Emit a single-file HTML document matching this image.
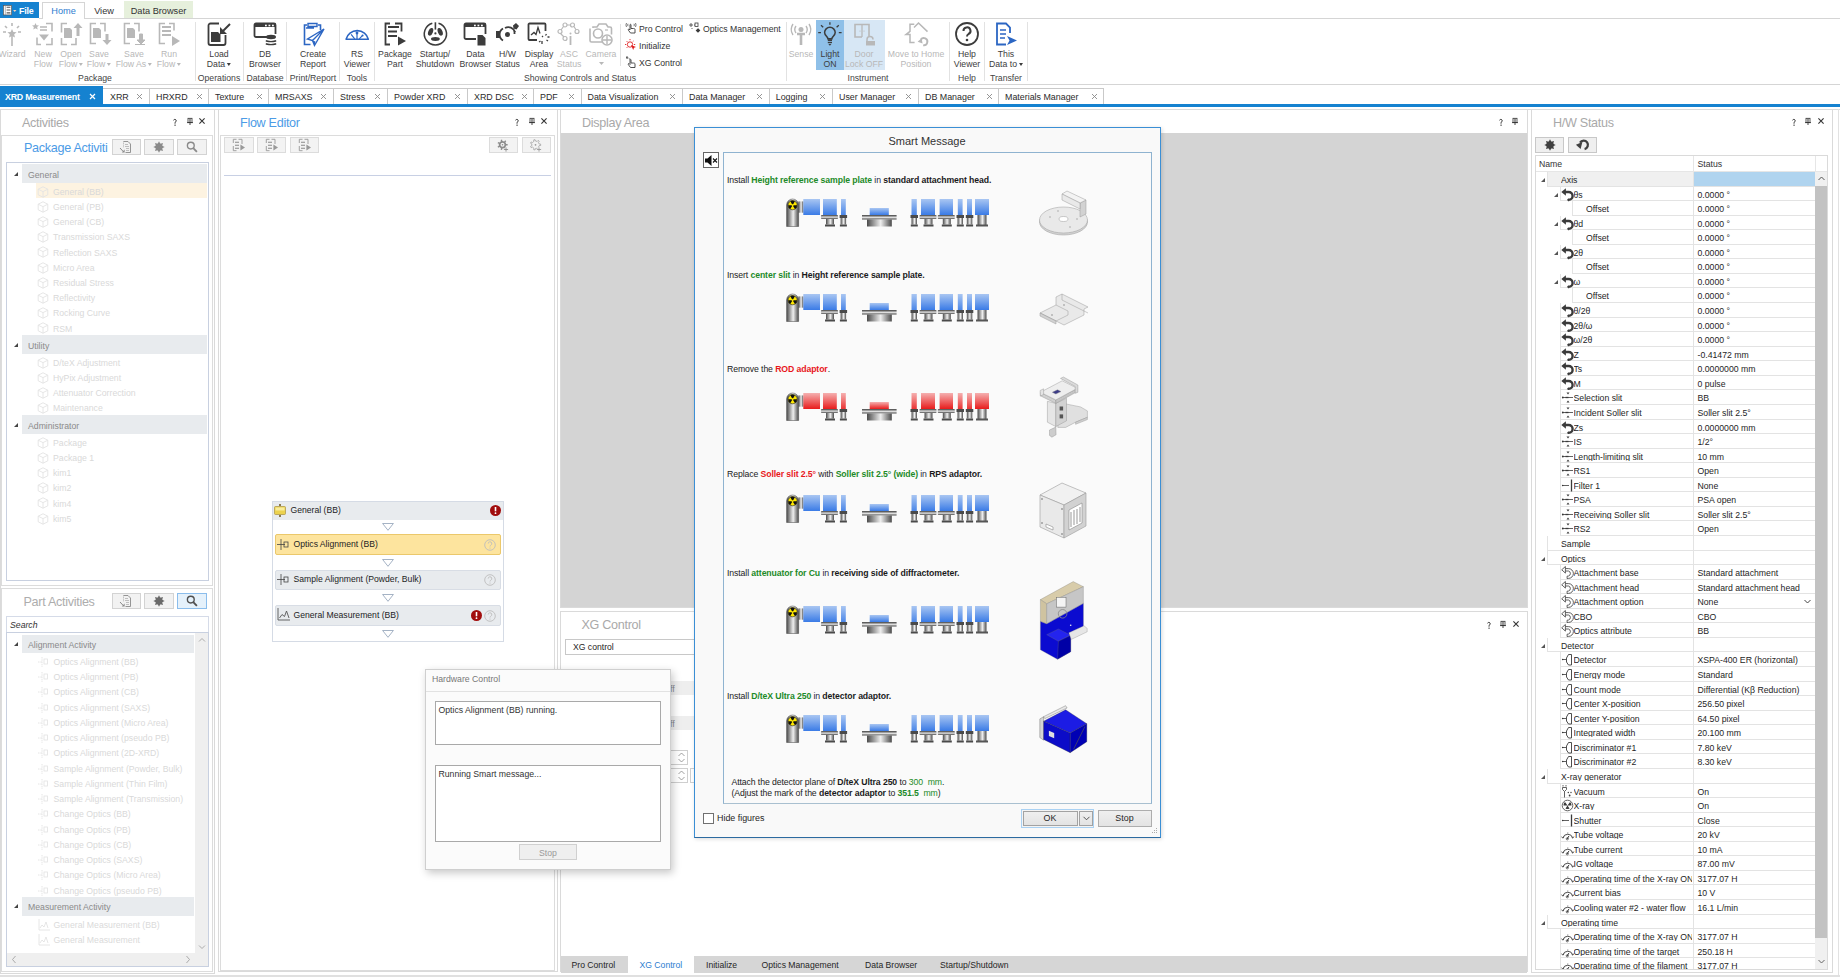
<!DOCTYPE html><html><head><meta charset="utf-8"><style>
*{margin:0;padding:0;box-sizing:border-box}
html,body{width:1840px;height:977px;overflow:hidden;background:#fff;font-family:"Liberation Sans",sans-serif;color:#262626}
.a{position:absolute}
.t{position:absolute;white-space:nowrap;line-height:1;font-size:8.7px}
.c{transform:translateX(-50%)}
svg{position:absolute;overflow:visible}
</style></head><body><div class="a" style="left:0px;top:2px;width:39px;height:16px;background:#1582d0"></div>
<svg style="left:2.6px;top:5.3px" width="9" height="10.3" viewBox="0 0 9 10.3"><rect x=".35" y=".35" width="8.3" height="9.6" fill="#fff" stroke="#555" stroke-width=".7"/><path d="M2.3 .5v9.3" stroke="#888" stroke-width=".6"/><path d="M3.6 2.2h3.8M3.6 5h3.8M3.6 7.9h3.8" stroke="#555" stroke-width="1.1"/></svg>
<svg style="left:13.2px;top:10px" width="3.5" height="2.5" viewBox="0 0 4 3"><path d="M0 0h4L2 2.5z" fill="#f3d6c0"/></svg>
<div class="t" style="left:19px;top:7.2px;color:#fff;font-size:8.9px;font-weight:bold;letter-spacing:-.2px">File</div>
<div class="a" style="left:39px;top:18px;width:3px;height:1px;background:#d5d5d5"></div>
<div class="a" style="left:42px;top:2px;width:43px;height:17px;background:#fff;border:1px solid #d5d5d5;border-bottom:none"></div>
<div class="t c" style="left:63.5px;top:7px;color:#2e7dd0;font-size:9.2px">Home</div>
<div class="t c" style="left:104px;top:7px;color:#333;font-size:9.2px">View</div>
<div class="a" style="left:124px;top:1px;width:69px;height:17px;background:#e6f0dc"></div>
<div class="t c" style="left:158.5px;top:7px;color:#333;font-size:9.2px">Data Browser</div>
<div class="a" style="left:85px;top:18px;width:1755px;height:1px;background:#d5d5d5"></div>
<div class="a" style="left:0px;top:84px;width:1840px;height:1px;background:#d5d5d5"></div>
<div class="a" style="left:195px;top:22px;width:1px;height:59px;background:#e2e2e2"></div>
<div class="a" style="left:243px;top:22px;width:1px;height:59px;background:#e2e2e2"></div>
<div class="a" style="left:286px;top:22px;width:1px;height:59px;background:#e2e2e2"></div>
<div class="a" style="left:339px;top:22px;width:1px;height:59px;background:#e2e2e2"></div>
<div class="a" style="left:374px;top:22px;width:1px;height:59px;background:#e2e2e2"></div>
<div class="a" style="left:786px;top:22px;width:1px;height:59px;background:#e2e2e2"></div>
<div class="a" style="left:949px;top:22px;width:1px;height:59px;background:#e2e2e2"></div>
<div class="a" style="left:984px;top:22px;width:1px;height:59px;background:#e2e2e2"></div>
<div class="a" style="left:1027px;top:22px;width:1px;height:59px;background:#e2e2e2"></div>
<div class="a" style="left:620px;top:24px;width:1px;height:42px;background:#e2e2e2"></div>
<div class="a" style="left:816px;top:20px;width:28px;height:50px;background:#8fc0e8"></div>
<div class="a" style="left:844px;top:20px;width:41px;height:50px;background:#d7e7f5"></div>
<svg style="left:0px;top:22px" width="24" height="24" viewBox="0 0 24 24"><g stroke="#b8b8b8" stroke-width="1.6" fill="none"><path d="M12 11v13M12 1v3M3 10h3M18 10h3M5 4l2 2M19 4l-2 2"/></g><path d="M12 7l1.4 3 3.2.3-2.4 2 .8 3.2L12 14l-3 1.5.8-3.2-2.4-2 3.2-.3z" fill="#b8b8b8"/></svg>
<div class="t c" style="left:12px;top:50.1px;color:#b8b8b8">Wizard</div>
<svg style="left:31px;top:22px" width="24" height="24" viewBox="0 0 24 24"><path d="M4.5 1l1 2.3 2.5.2-1.9 1.6.6 2.5L4.5 6.3 2.3 7.6l.6-2.5L1 3.5l2.5-.2z" fill="#b8b8b8"/><g stroke="#b8b8b8" stroke-width="1.6" fill="none"><path d="M15 1.5h6v8M9 5h7M9 8h7M21 16v6.5h-6M10 22.5H6v-7"/></g><path d="M8 12.5h10l-5 6z" fill="#b8b8b8"/></svg>
<div class="t c" style="left:43px;top:50.1px;color:#b8b8b8">New</div>
<div class="t c" style="left:43px;top:59.900000000000006px;color:#b8b8b8">Flow</div>
<svg style="left:59px;top:22px" width="24" height="24" viewBox="0 0 24 24"><g stroke="#b8b8b8" stroke-width="1.6" fill="none"><path d="M8 1.5H2.5v9M2.5 16v6.5H8M12 22.5h5V16"/></g><path d="M5 6h6l2 2v8H5z" fill="#b8b8b8"/><path d="M19 1l4.5 5h-3v8h-3V6h-3z" fill="#b8b8b8"/></svg>
<div class="t c" style="left:71px;top:50.1px;color:#b8b8b8">Open</div>
<div class="t c" style="left:71px;top:59.900000000000006px;color:#b8b8b8">Flow<span style="display:inline-block;width:0;height:0;border-left:2.5px solid transparent;border-right:2.5px solid transparent;border-top:3px solid #b8b8b8;margin-left:2px;vertical-align:1px"></span></div>
<svg style="left:88px;top:22px" width="24" height="24" viewBox="0 0 24 24"><g stroke="#b8b8b8" stroke-width="1.6" fill="none"><path d="M8 1.5H2.5v20H8M12 1.5h5v8"/></g><path d="M5 6h6l2 2v8H5z" fill="#b8b8b8"/><path d="M17.5 12h3v6h3l-4.5 5-4.5-5h3z" fill="#b8b8b8"/></svg>
<div class="t c" style="left:99px;top:50.1px;color:#b8b8b8">Save</div>
<div class="t c" style="left:99px;top:59.900000000000006px;color:#b8b8b8">Flow<span style="display:inline-block;width:0;height:0;border-left:2.5px solid transparent;border-right:2.5px solid transparent;border-top:3px solid #b8b8b8;margin-left:2px;vertical-align:1px"></span></div>
<svg style="left:122px;top:22px" width="24" height="24" viewBox="0 0 24 24"><g stroke="#b8b8b8" stroke-width="1.6" fill="none"><path d="M8 1.5H2.5v20H8M12 1.5h5v8"/></g><path d="M5 6h6l2 2v8H5z" fill="#b8b8b8"/><path d="M17.5 12h3v6h2.5l-4 4-4-4h2.5zM13 22.5h10" fill="#b8b8b8" stroke="#b8b8b8" stroke-width="1"/></svg>
<div class="t c" style="left:134px;top:50.1px;color:#b8b8b8">Save</div>
<div class="t c" style="left:134px;top:59.900000000000006px;color:#b8b8b8">Flow As<span style="display:inline-block;width:0;height:0;border-left:2.5px solid transparent;border-right:2.5px solid transparent;border-top:3px solid #b8b8b8;margin-left:2px;vertical-align:1px"></span></div>
<svg style="left:157px;top:22px" width="24" height="24" viewBox="0 0 24 24"><g stroke="#b8b8b8" stroke-width="1.6" fill="none"><path d="M8 1.5H2.5v20H8M12 1.5h5v7"/></g><path d="M5 5h9M5 9h9M5 13h9" stroke="#b8b8b8" stroke-width="2"/><path d="M15 14l8 5-8 5z" fill="#b8b8b8"/></svg>
<div class="t c" style="left:169px;top:50.1px;color:#b8b8b8">Run</div>
<div class="t c" style="left:169px;top:59.900000000000006px;color:#b8b8b8">Flow<span style="display:inline-block;width:0;height:0;border-left:2.5px solid transparent;border-right:2.5px solid transparent;border-top:3px solid #b8b8b8;margin-left:2px;vertical-align:1px"></span></div>
<div class="t c" style="left:95px;top:73.6px;color:#444">Package</div>
<svg style="left:207px;top:22px" width="24" height="24" viewBox="0 0 24 24"><path d="M12 1.5H3.5a2 2 0 0 0-2 2V21a2 2 0 0 0 2 2h13a2 2 0 0 0 2-2V13" stroke="#3c3c3c" stroke-width="1.8" fill="none"/><path d="M4 10h7l2.5 2.5V20H4z" fill="#3c3c3c"/><path d="M23 2L16 9" stroke="#3c3c3c" stroke-width="2"/><path d="M13 5v7h7z" fill="#3c3c3c"/></svg>
<div class="t c" style="left:219px;top:50.1px;color:#3c3c3c">Load</div>
<div class="t c" style="left:219px;top:59.900000000000006px;color:#3c3c3c">Data<span style="display:inline-block;width:0;height:0;border-left:2.5px solid transparent;border-right:2.5px solid transparent;border-top:3px solid #3c3c3c;margin-left:2px;vertical-align:1px"></span></div>
<div class="t c" style="left:219px;top:73.6px;color:#444">Operations</div>
<svg style="left:253px;top:22px" width="24" height="24" viewBox="0 0 24 24"><path d="M16 15H3a1.5 1.5 0 0 1-1.5-1.5V3A1.5 1.5 0 0 1 3 1.5h18A1.5 1.5 0 0 1 22.5 3v9" stroke="#3c3c3c" stroke-width="1.8" fill="none"/><path d="M1.5 2h21v3h-21z" fill="#3c3c3c"/><rect x="12" y="2.7" width="1.8" height="1.6" fill="#fff"/><rect x="15.5" y="2.7" width="1.8" height="1.6" fill="#fff"/><rect x="19" y="2.7" width="1.8" height="1.6" fill="#fff"/><ellipse cx="18" cy="15" rx="5" ry="2.2" fill="#3c3c3c"/><path d="M13 18.5c1 1.5 9 1.5 10 0M13 21.5c1 1.5 9 1.5 10 0" stroke="#3c3c3c" stroke-width="1.4" fill="none"/></svg>
<div class="t c" style="left:265px;top:50.1px;color:#3c3c3c">DB</div>
<div class="t c" style="left:265px;top:59.900000000000006px;color:#3c3c3c">Browser</div>
<div class="t c" style="left:265px;top:73.6px;color:#444">Database</div>
<svg style="left:301px;top:22px" width="24" height="24" viewBox="0 0 24 24"><path d="M6 3H3.5v19.5h6M17 3h2.5v5" stroke="#2c66c3" stroke-width="1.6" fill="none"/><path d="M7 1.5h9v3H7zM5 6h8" stroke="#2c66c3" stroke-width="1.4" fill="none"/><path d="M23 7L6.5 17l5 1.5 2 5L23 7zM11.5 18.5L23 7" stroke="#2c66c3" stroke-width="1.4" fill="none"/><path d="M11.5 18.5l2 5 1-4z" fill="#2c66c3"/></svg>
<div class="t c" style="left:313px;top:50.1px;color:#3c3c3c">Create</div>
<div class="t c" style="left:313px;top:59.900000000000006px;color:#3c3c3c">Report</div>
<div class="t c" style="left:313px;top:73.6px;color:#444">Print/Report</div>
<svg style="left:345px;top:22px" width="24" height="24" viewBox="0 0 24 24"><path d="M1.1 17.2A11.3 10.6 0 0 1 23.3 17.2Z" stroke="#2c66c3" stroke-width="1.6" fill="none" stroke-linejoin="round"/><path d="M12 11v6.2M6.1 12.4l3.6 4.4M17.6 13.4l-3.3 3.4" stroke="#2c66c3" stroke-width="1.2"/><circle cx="12" cy="11" r="1.4" fill="#2c66c3"/><circle cx="17.6" cy="13.4" r="1" fill="#2c66c3"/></svg>
<div class="t c" style="left:357px;top:50.1px;color:#3c3c3c">RS</div>
<div class="t c" style="left:357px;top:59.900000000000006px;color:#3c3c3c">Viewer</div>
<div class="t c" style="left:357px;top:73.6px;color:#444">Tools</div>
<svg style="left:383px;top:22px" width="24" height="24" viewBox="0 0 24 24"><g stroke="#3c3c3c" stroke-width="1.8" fill="none"><path d="M7 1.5H2.5v21H7M12 1.5h6.5v8"/></g><path d="M5 5h11M5 9.5h9M5 14h9" stroke="#3c3c3c" stroke-width="2.2"/><path d="M15 14.5l8 4.5-8 4.5z" fill="#3c3c3c"/></svg>
<div class="t c" style="left:395px;top:50.1px;color:#3c3c3c">Package</div>
<div class="t c" style="left:395px;top:59.900000000000006px;color:#3c3c3c">Part</div>
<svg style="left:423px;top:22px" width="24" height="24" viewBox="0 0 24 24"><path d="M9.3 1.2A11.1 11.1 0 1 0 15.5 1.2" stroke="#3c3c3c" stroke-width="1.5" fill="none"/><path d="M12.4 .3V7.6" stroke="#3c3c3c" stroke-width="1.6"/><ellipse cx="7.6" cy="9.8" rx="2.3" ry="4" transform="rotate(22 7.6 9.8)" fill="#3c3c3c"/><ellipse cx="17.2" cy="9.8" rx="2.3" ry="4" transform="rotate(-22 17.2 9.8)" fill="#3c3c3c"/><ellipse cx="12.4" cy="17" rx="4.4" ry="1.9" fill="#3c3c3c"/><circle cx="12.4" cy="11.4" r="1.1" fill="#3c3c3c"/></svg>
<div class="t c" style="left:435px;top:50.1px;color:#3c3c3c">Startup/</div>
<div class="t c" style="left:435px;top:59.900000000000006px;color:#3c3c3c">Shutdown</div>
<svg style="left:463px;top:22px" width="24" height="24" viewBox="0 0 24 24"><path d="M13 17H3a1.5 1.5 0 0 1-1.5-1.5V3A1.5 1.5 0 0 1 3 1.5h18A1.5 1.5 0 0 1 22.5 3v9" stroke="#3c3c3c" stroke-width="1.8" fill="none"/><path d="M1.5 2h21v3h-21z" fill="#3c3c3c"/><rect x="11" y="2.7" width="1.8" height="1.6" fill="#fff"/><rect x="14.5" y="2.7" width="1.8" height="1.6" fill="#fff"/><rect x="18" y="2.7" width="1.8" height="1.6" fill="#fff"/><path d="M14.5 13h5l3 3v7.5h-8z" fill="#3c3c3c"/></svg>
<div class="t c" style="left:475.5px;top:50.1px;color:#3c3c3c">Data</div>
<div class="t c" style="left:475.5px;top:59.900000000000006px;color:#3c3c3c">Browser</div>
<svg style="left:495px;top:22px" width="24" height="24" viewBox="0 0 24 24"><path d="M1 9h4v7H1z" fill="#3c3c3c"/><path d="M8 6.5a7 7 0 0 0 0 12" stroke="#3c3c3c" stroke-width="1.8" fill="none"/><circle cx="12.5" cy="12.5" r="2.5" fill="#3c3c3c"/><path d="M10 6a7 7 0 0 1 10 4" stroke="#3c3c3c" stroke-width="1.8" fill="none"/><path d="M18 3.5l3-2.5 3 3-2.5 3.5-3-1z" fill="#3c3c3c"/><path d="M19.5 9v3" stroke="#3c3c3c" stroke-width="1.8"/></svg>
<div class="t c" style="left:507.5px;top:50.1px;color:#3c3c3c">H/W</div>
<div class="t c" style="left:507.5px;top:59.900000000000006px;color:#3c3c3c">Status</div>
<svg style="left:527px;top:22px" width="24" height="24" viewBox="0 0 24 24"><path d="M10 18H2.5a1 1 0 0 1-1-1V2.5a1 1 0 0 1 1-1h15a1 1 0 0 1 1 1V9" stroke="#3c3c3c" stroke-width="1.8" fill="none"/><path d="M4 13l3-2.5 2 2 2-7 2 6" stroke="#3c3c3c" stroke-width="1.3" fill="none"/><path d="M15 19v3M15 14l1 1M19.5 12l-1 1.5M22.5 15h-2M21 19l-1.5-1M12 20l1.5-1" stroke="#3c3c3c" stroke-width="1.3"/></svg>
<div class="t c" style="left:539px;top:50.1px;color:#3c3c3c">Display</div>
<div class="t c" style="left:539px;top:59.900000000000006px;color:#3c3c3c">Area</div>
<svg style="left:557px;top:22px" width="24" height="24" viewBox="0 0 24 24"><g stroke="#b8b8b8" stroke-width="1.2" fill="none"><circle cx="8" cy="3" r="2"/><circle cx="15.5" cy="3" r="2"/><circle cx="3" cy="9.5" r="2"/><circle cx="20" cy="9.5" r="2"/><circle cx="8" cy="16.5" r="2"/><path d="M10 3h3.5M6.5 4.5l-2.5 3.5M17 4.5l2 3.2M3.5 11.5l3.5 3.5"/></g><path d="M13.5 14v9" stroke="#b8b8b8" stroke-width="1.8"/><circle cx="13.5" cy="11.5" r="1" fill="#b8b8b8"/></svg>
<div class="t c" style="left:569px;top:50.1px;color:#b8b8b8">ASC</div>
<div class="t c" style="left:569px;top:59.900000000000006px;color:#b8b8b8">Status</div>
<svg style="left:589px;top:22px" width="24" height="24" viewBox="0 0 24 24"><path d="M4 6V5h4l2-3h7l2 3h2a1.5 1.5 0 0 1 1.5 1.5v6M13 20H2.5A1.5 1.5 0 0 1 1 18.5v-12" stroke="#b8b8b8" stroke-width="1.6" fill="none"/><circle cx="9" cy="11.5" r="4.5" stroke="#b8b8b8" stroke-width="1.6" fill="none"/><path d="M16 8h3" stroke="#b8b8b8" stroke-width="1.2"/><circle cx="18" cy="18" r="5" stroke="#b8b8b8" stroke-width="1.6" fill="none"/><path d="M18 14v8M14 18h8" stroke="#b8b8b8" stroke-width="1.4"/></svg>
<div class="t c" style="left:601px;top:50.1px;color:#b8b8b8">Camera</div>
<svg style="left:598.5px;top:62px" width="5" height="3" viewBox="0 0 5 3"><path d="M0 0h5L2.5 3z" fill="#b8b8b8"/></svg>
<svg style="left:625px;top:22px" width="12" height="12" viewBox="0 0 12 12"><path d="M1.5 1a4 4 0 0 0 0 4M3 1.8a2.5 2.5 0 0 0 0 2.4M10.5 1a4 4 0 0 1 0 4M9 1.8a2.5 2.5 0 0 1 0 2.4" stroke="#3c3c3c" stroke-width=".7" fill="none"/><path d="M5 3v5l-1-1c-1 0-1 1 0 2l1.5 2h4.5V7.5c0-1-1-1-1.5-1H6V3c0-1-1-1-1 0z" stroke="#3c3c3c" stroke-width=".9" fill="#fff"/></svg>
<div class="t" style="left:639px;top:24.7px;color:#333">Pro Control</div>
<svg style="left:625px;top:39px" width="12" height="12" viewBox="0 0 12 12"><g stroke="#e02020" stroke-width=".9" fill="none"><circle cx="5" cy="5.5" r="2.7"/><path d="M5 0v1.2M0 5.5h1.2M9 5.5h1.2M1.5 2l.8.8M8.5 2l-.8.8M1.5 9l.8-.8"/></g><path d="M6 6l5 2-2 .7-.8 2.3z" fill="#e02020"/></svg>
<div class="t" style="left:639px;top:41.7px;color:#333">Initialize</div>
<svg style="left:625px;top:56px" width="12" height="12" viewBox="0 0 12 12"><path d="M1 1.5l2.5.5M2 0v3M4 3h1" stroke="#3c3c3c" stroke-width=".8"/><path d="M5 4v4.5l-1-1c-1 0-1 1 0 2l1.5 2h4.5V8c0-1-1-1-1.5-1H6V4c0-1-1-1-1 0z" stroke="#3c3c3c" stroke-width=".9" fill="#fff"/></svg>
<div class="t" style="left:639px;top:58.6px;color:#333">XG Control</div>
<svg style="left:689px;top:22px" width="12" height="12" viewBox="0 0 12 12"><path d="M0 3h4M2 1v4M3 6v1M5 3h1" stroke="#3c3c3c" stroke-width=".8"/><rect x="6" y="1" width="3" height="3.5" stroke="#3c3c3c" stroke-width=".8" fill="none"/><path d="M9 7l1.5 1.5L9 10 7.5 8.5z" fill="#3c3c3c" stroke="#3c3c3c" stroke-width="1.2"/></svg>
<div class="t" style="left:703px;top:24.7px;color:#333">Optics Management</div>
<div class="t c" style="left:580px;top:73.6px;color:#444">Showing Controls and Status</div>
<svg style="left:789px;top:22px" width="24" height="24" viewBox="0 0 24 24"><path d="M4 2a10 10 0 0 0 0 11M7 4a6 6 0 0 0 0 7M20 2a10 10 0 0 1 0 11M17 4a6 6 0 0 1 0 7" stroke="#b8b8b8" stroke-width="1.4" fill="none"/><circle cx="12" cy="7.5" r="2.5" fill="#b8b8b8"/><path d="M8 12h8M12 12v11" stroke="#b8b8b8" stroke-width="2.6"/></svg>
<div class="t c" style="left:801px;top:50.1px;color:#b8b8b8">Sense</div>
<svg style="left:818px;top:22px" width="24" height="24" viewBox="0 0 24 24"><path d="M9.9 16.8C9.9 14.8 6.6 13.6 6.6 10.6A5.3 5.3 0 0 1 17.2 10.6C17.2 13.6 13.9 14.8 13.9 16.8z" stroke="#3c3c3c" stroke-width="1.5" fill="none"/><path d="M9.8 17.2h4.2v2h-4.2z" fill="#3c3c3c"/><path d="M9.8 20.6h4.2" stroke="#3c3c3c" stroke-width="1.2"/><path d="M10.4 22h3l-1.5 1.8z" fill="#3c3c3c"/><path d="M11.9 .2v2.6M.2 10.7h2.8M20.8 10.7h2.8M3 3.2l2.2 2M20.8 3.2l-2.2 2" stroke="#3c3c3c" stroke-width="1.3"/></svg>
<div class="t c" style="left:830px;top:50.1px;color:#3c3c3c">Light</div>
<div class="t c" style="left:830px;top:59.900000000000006px;color:#3c3c3c">ON</div>
<svg style="left:852px;top:22px" width="24" height="24" viewBox="0 0 24 24"><path d="M10 15H3V2.5h14V14" stroke="#b8b8b8" stroke-width="1.6" fill="none"/><path d="M10 2.5v12.5" stroke="#b8b8b8" stroke-width="1.3"/><circle cx="8" cy="9" r=".6" fill="#b8b8b8"/><circle cx="12" cy="9" r=".6" fill="#b8b8b8"/><path d="M15 19.5v-2a3 3 0 0 1 6 0" stroke="#b8b8b8" stroke-width="1.5" fill="none"/><path d="M14 19h9v4.5h-9z" fill="#b8b8b8"/></svg>
<div class="t c" style="left:864px;top:50.1px;color:#b8b8b8">Door</div>
<div class="t c" style="left:864px;top:59.900000000000006px;color:#b8b8b8">Lock OFF</div>
<svg style="left:904px;top:22px" width="24" height="24" viewBox="0 0 24 24"><path d="M10.3 2.2H6V9.4L2 12.6H6V20.4H10.6M10 5.5L14.5 1 23.5 9.6" stroke="#b8b8b8" stroke-width="1.5" fill="none"/><path d="M16.8 17.6A3.6 3.6 0 1 1 19.2 23.2" stroke="#b8b8b8" stroke-width="1.9" fill="none"/><path d="M13.6 19.8L17.6 16.2 18.6 21.4z" fill="#b8b8b8"/></svg>
<div class="t c" style="left:916px;top:50.1px;color:#b8b8b8">Move to Home</div>
<div class="t c" style="left:916px;top:59.900000000000006px;color:#b8b8b8">Position</div>
<div class="t c" style="left:868px;top:73.6px;color:#444">Instrument</div>
<svg style="left:955px;top:22px" width="24" height="24" viewBox="0 0 24 24"><circle cx="12" cy="12" r="11" stroke="#3c3c3c" stroke-width="1.8" fill="none"/><path d="M8.5 9a3.5 3.5 0 1 1 5 3c-1 .6-1.5 1-1.5 2.5" stroke="#3c3c3c" stroke-width="2" fill="none"/><circle cx="12" cy="18" r="1.3" fill="#3c3c3c"/></svg>
<div class="t c" style="left:967px;top:50.1px;color:#3c3c3c">Help</div>
<div class="t c" style="left:967px;top:59.900000000000006px;color:#3c3c3c">Viewer</div>
<div class="t c" style="left:967px;top:73.6px;color:#444">Help</div>
<svg style="left:994px;top:22px" width="24" height="24" viewBox="0 0 24 24"><path d="M12 22.5H3V1.5h9l4 4V11" stroke="#2c66c3" stroke-width="1.8" fill="none"/><path d="M6 8h6M6 12h6M6 16h5" stroke="#2c66c3" stroke-width="1.6"/><path d="M13 14l10 4.5-10 4.5 2.5-4.5z" fill="#2c66c3"/></svg>
<div class="t c" style="left:1006px;top:50.1px;color:#3c3c3c">This</div>
<div class="t c" style="left:1006px;top:59.900000000000006px;color:#3c3c3c">Data to<span style="display:inline-block;width:0;height:0;border-left:2.5px solid transparent;border-right:2.5px solid transparent;border-top:3px solid #3c3c3c;margin-left:2px;vertical-align:1px"></span></div>
<div class="t c" style="left:1006px;top:73.6px;color:#444">Transfer</div>
<div class="a" style="left:0px;top:104px;width:1840px;height:3px;background:#1582d0"></div>
<div class="a" style="left:0px;top:109px;width:1840px;height:1px;background:#dadada"></div>
<div class="a" style="left:0px;top:86px;width:103px;height:18px;background:#1582d0"></div>
<div class="t" style="left:5px;top:92.8px;color:#fff;font-size:8.9px;font-weight:bold;letter-spacing:-0.25px">XRD Measurement</div>
<svg style="left:89.5px;top:93.5px" width="5" height="5" viewBox="0 0 5 5"><path d="M0 0L5 5M5 0L0 5" stroke="#fff" stroke-width="1.2"/></svg>
<div class="a" style="left:103px;top:88px;width:46px;height:16px;background:#fff;border-top:1px solid #c9c9c9"></div>
<div class="t" style="left:110px;top:92.8px;color:#2b2b2b;font-size:8.9px">XRR</div>
<svg style="left:136.5px;top:93.5px" width="5" height="5" viewBox="0 0 5 5"><path d="M0 0L5 5M5 0L0 5" stroke="#8a8a8a" stroke-width=".9"/></svg>
<div class="a" style="left:149px;top:88px;width:59px;height:16px;background:#fff;border-top:1px solid #c9c9c9"></div>
<div class="t" style="left:156px;top:92.8px;color:#2b2b2b;font-size:8.9px">HRXRD</div>
<svg style="left:196.5px;top:93.5px" width="5" height="5" viewBox="0 0 5 5"><path d="M0 0L5 5M5 0L0 5" stroke="#8a8a8a" stroke-width=".9"/></svg>
<div class="a" style="left:208px;top:88px;width:60px;height:16px;background:#fff;border-top:1px solid #c9c9c9"></div>
<div class="t" style="left:215px;top:92.8px;color:#2b2b2b;font-size:8.9px">Texture</div>
<svg style="left:256.5px;top:93.5px" width="5" height="5" viewBox="0 0 5 5"><path d="M0 0L5 5M5 0L0 5" stroke="#8a8a8a" stroke-width=".9"/></svg>
<div class="a" style="left:268px;top:88px;width:65px;height:16px;background:#fff;border-top:1px solid #c9c9c9"></div>
<div class="t" style="left:275px;top:92.8px;color:#2b2b2b;font-size:8.9px">MRSAXS</div>
<svg style="left:320.5px;top:93.5px" width="5" height="5" viewBox="0 0 5 5"><path d="M0 0L5 5M5 0L0 5" stroke="#8a8a8a" stroke-width=".9"/></svg>
<div class="a" style="left:333px;top:88px;width:54px;height:16px;background:#fff;border-top:1px solid #c9c9c9"></div>
<div class="t" style="left:340px;top:92.8px;color:#2b2b2b;font-size:8.9px">Stress</div>
<svg style="left:374.5px;top:93.5px" width="5" height="5" viewBox="0 0 5 5"><path d="M0 0L5 5M5 0L0 5" stroke="#8a8a8a" stroke-width=".9"/></svg>
<div class="a" style="left:387px;top:88px;width:80px;height:16px;background:#fff;border-top:1px solid #c9c9c9"></div>
<div class="t" style="left:394px;top:92.8px;color:#2b2b2b;font-size:8.9px">Powder XRD</div>
<svg style="left:454.5px;top:93.5px" width="5" height="5" viewBox="0 0 5 5"><path d="M0 0L5 5M5 0L0 5" stroke="#8a8a8a" stroke-width=".9"/></svg>
<div class="a" style="left:467px;top:88px;width:66px;height:16px;background:#fff;border-top:1px solid #c9c9c9"></div>
<div class="t" style="left:474px;top:92.8px;color:#2b2b2b;font-size:8.9px">XRD DSC</div>
<svg style="left:521.5px;top:93.5px" width="5" height="5" viewBox="0 0 5 5"><path d="M0 0L5 5M5 0L0 5" stroke="#8a8a8a" stroke-width=".9"/></svg>
<div class="a" style="left:533px;top:88px;width:47.5px;height:16px;background:#fff;border-top:1px solid #c9c9c9"></div>
<div class="t" style="left:540px;top:92.8px;color:#2b2b2b;font-size:8.9px">PDF</div>
<svg style="left:568.5px;top:93.5px" width="5" height="5" viewBox="0 0 5 5"><path d="M0 0L5 5M5 0L0 5" stroke="#8a8a8a" stroke-width=".9"/></svg>
<div class="a" style="left:580.5px;top:88px;width:101.5px;height:16px;background:#fff;border-top:1px solid #c9c9c9"></div>
<div class="t" style="left:587.5px;top:92.8px;color:#2b2b2b;font-size:8.9px">Data Visualization</div>
<svg style="left:670.0px;top:93.5px" width="5" height="5" viewBox="0 0 5 5"><path d="M0 0L5 5M5 0L0 5" stroke="#8a8a8a" stroke-width=".9"/></svg>
<div class="a" style="left:682px;top:88px;width:86.75px;height:16px;background:#fff;border-top:1px solid #c9c9c9"></div>
<div class="t" style="left:689px;top:92.8px;color:#2b2b2b;font-size:8.9px">Data Manager</div>
<svg style="left:756.5px;top:93.5px" width="5" height="5" viewBox="0 0 5 5"><path d="M0 0L5 5M5 0L0 5" stroke="#8a8a8a" stroke-width=".9"/></svg>
<div class="a" style="left:768.75px;top:88px;width:63.25px;height:16px;background:#fff;border-top:1px solid #c9c9c9"></div>
<div class="t" style="left:775.75px;top:92.8px;color:#2b2b2b;font-size:8.9px">Logging</div>
<svg style="left:820.0px;top:93.5px" width="5" height="5" viewBox="0 0 5 5"><path d="M0 0L5 5M5 0L0 5" stroke="#8a8a8a" stroke-width=".9"/></svg>
<div class="a" style="left:832px;top:88px;width:86px;height:16px;background:#fff;border-top:1px solid #c9c9c9"></div>
<div class="t" style="left:839px;top:92.8px;color:#2b2b2b;font-size:8.9px">User Manager</div>
<svg style="left:905.5px;top:93.5px" width="5" height="5" viewBox="0 0 5 5"><path d="M0 0L5 5M5 0L0 5" stroke="#8a8a8a" stroke-width=".9"/></svg>
<div class="a" style="left:918px;top:88px;width:80px;height:16px;background:#fff;border-top:1px solid #c9c9c9"></div>
<div class="t" style="left:925px;top:92.8px;color:#2b2b2b;font-size:8.9px">DB Manager</div>
<svg style="left:986.5px;top:93.5px" width="5" height="5" viewBox="0 0 5 5"><path d="M0 0L5 5M5 0L0 5" stroke="#8a8a8a" stroke-width=".9"/></svg>
<div class="a" style="left:998px;top:88px;width:105px;height:16px;background:#fff;border-top:1px solid #c9c9c9"></div>
<div class="t" style="left:1005px;top:92.8px;color:#2b2b2b;font-size:8.9px">Materials Manager</div>
<svg style="left:1091.5px;top:93.5px" width="5" height="5" viewBox="0 0 5 5"><path d="M0 0L5 5M5 0L0 5" stroke="#8a8a8a" stroke-width=".9"/></svg>
<div class="a" style="left:149px;top:88px;width:1px;height:16px;background:#c9c9c9"></div>
<div class="a" style="left:208px;top:88px;width:1px;height:16px;background:#c9c9c9"></div>
<div class="a" style="left:268px;top:88px;width:1px;height:16px;background:#c9c9c9"></div>
<div class="a" style="left:333px;top:88px;width:1px;height:16px;background:#c9c9c9"></div>
<div class="a" style="left:387px;top:88px;width:1px;height:16px;background:#c9c9c9"></div>
<div class="a" style="left:467px;top:88px;width:1px;height:16px;background:#c9c9c9"></div>
<div class="a" style="left:533px;top:88px;width:1px;height:16px;background:#c9c9c9"></div>
<div class="a" style="left:580.5px;top:88px;width:1px;height:16px;background:#c9c9c9"></div>
<div class="a" style="left:682px;top:88px;width:1px;height:16px;background:#c9c9c9"></div>
<div class="a" style="left:768.75px;top:88px;width:1px;height:16px;background:#c9c9c9"></div>
<div class="a" style="left:832px;top:88px;width:1px;height:16px;background:#c9c9c9"></div>
<div class="a" style="left:918px;top:88px;width:1px;height:16px;background:#c9c9c9"></div>
<div class="a" style="left:998px;top:88px;width:1px;height:16px;background:#c9c9c9"></div>
<div class="a" style="left:1103px;top:88px;width:1px;height:16px;background:#c9c9c9"></div>
<div class="a" style="left:0px;top:109px;width:215px;height:865px;border:1px solid #dadada;background:#fff"></div>
<div class="t" style="left:22px;top:116.5px;font-size:12.6px;color:#a9a9a9;letter-spacing:-0.3px">Activities</div>
<svg style="left:173.2px;top:118.8px" width="4" height="7" viewBox="0 0 4 7"><path d="M.5 1.2Q1.5 0 2.6.6 3.6 1.4 2.8 2.6 2 3.4 2 4.6" stroke="#222" stroke-width="1" fill="none"/><rect x="1.5" y="5.6" width="1.1" height="1.2" fill="#222"/></svg>
<svg style="left:186.5px;top:118px" width="6" height="7" viewBox="0 0 6 7"><rect x="1" y=".3" width="4" height="4.2" fill="none" stroke="#333" stroke-width=".8"/><rect x="2.5" y=".5" width="1" height="4" fill="#333"/><path d="M0 4.6h6M3 4.6V7" stroke="#333" stroke-width=".9"/></svg>
<svg style="left:199.0px;top:118px" width="6" height="6" viewBox="0 0 6 6"><path d="M.4 .4L5.6 5.6M5.6 .4L.4 5.6" stroke="#333" stroke-width="1.1"/></svg>
<div class="a" style="left:1px;top:135px;width:212px;height:451px;border:1px solid #dcdcdc;background:#fff"></div>
<div class="t" style="left:24px;top:141.5px;font-size:12.6px;color:#4c9be6;letter-spacing:-0.3px">Package Activiti</div>
<div class="a" style="left:111.5px;top:139px;width:29.5px;height:16px;background:#f2f2f2;border:1px solid #d3d3d3"></div>
<svg style="left:120.25px;top:141.0px" width="12" height="12" viewBox="0 0 12 12"><path d="M3.5 .5h4.5l2.5 2.5V11.5H5.5" stroke="#8a8a8a" stroke-width=".9" fill="none"/><path d="M5 3.5h3M5 5.5h4M6 7.5h3M6 9.5h3" stroke="#9a9a9a" stroke-width=".6"/><path d="M3.5 .5v6" stroke="#9a9a9a" stroke-width=".6" stroke-dasharray="1 .6"/><path d="M0 7l3.5 3.8" stroke="#8a8a8a" stroke-width="1"/><path d="M1.8 11.5H4.6V8.6z" fill="#8a8a8a"/></svg>
<div class="a" style="left:144.2px;top:139px;width:29.5px;height:16px;background:#f2f2f2;border:1px solid #d3d3d3"></div>
<svg style="left:152.95px;top:141.0px" width="12" height="12" viewBox="0 0 12 12"><path d="M6.00 0.30 L4.70 2.86 L1.97 1.97 L2.86 4.70 L0.30 6.00 L2.86 7.30 L1.97 10.03 L4.70 9.14 L6.00 11.70 L7.30 9.14 L10.03 10.03 L9.14 7.30 L11.70 6.00 L9.14 4.70 L10.03 1.97 L7.30 2.86z" fill="#8a8a8a"/><circle cx="6" cy="6" r="3.4" fill="#8a8a8a"/></svg>
<div class="a" style="left:177px;top:139px;width:29.5px;height:16px;background:#f2f2f2;border:1px solid #d3d3d3"></div>
<svg style="left:185.75px;top:141.0px" width="12" height="12" viewBox="0 0 12 12"><circle cx="4.8" cy="4.6" r="3.4" stroke="#8a8a8a" stroke-width="1.4" fill="none"/><path d="M7.3 7.2l3.6 3.6" stroke="#8a8a8a" stroke-width="1.9"/></svg>
<div class="a" style="left:6px;top:162px;width:203px;height:419px;border:1px solid #c8d0e0;background:#fff"></div>
<div class="a" style="left:22px;top:164px;width:185px;height:19px;background:#e8ebee"></div>
<svg style="left:14px;top:171.5px" width="4" height="4" viewBox="0 0 4 4"><path d="M4 0V4H0z" fill="#444"/></svg>
<div class="t" style="left:28px;top:170.6px;color:#8a8a8a">General</div>
<div class="a" style="left:36px;top:183px;width:171px;height:15px;background:#fdf3e1"></div>
<svg style="left:37px;top:185.5px" width="12" height="12" viewBox="0 0 12 12"><path d="M6 .8l4.8 2.4v5.6L6 11.2 1.2 8.8V3.2zM1.2 3.2L6 5.6l4.8-2.4M6 5.6v5.6" stroke="#e3e3e3" stroke-width=".9" fill="none"/></svg>
<div class="t" style="left:53px;top:187.8px;color:#d9d9d9">General (BB)</div>
<svg style="left:37px;top:200.7px" width="12" height="12" viewBox="0 0 12 12"><path d="M6 .8l4.8 2.4v5.6L6 11.2 1.2 8.8V3.2zM1.2 3.2L6 5.6l4.8-2.4M6 5.6v5.6" stroke="#e3e3e3" stroke-width=".9" fill="none"/></svg>
<div class="t" style="left:53px;top:203.0px;color:#d9d9d9">General (PB)</div>
<svg style="left:37px;top:215.89999999999998px" width="12" height="12" viewBox="0 0 12 12"><path d="M6 .8l4.8 2.4v5.6L6 11.2 1.2 8.8V3.2zM1.2 3.2L6 5.6l4.8-2.4M6 5.6v5.6" stroke="#e3e3e3" stroke-width=".9" fill="none"/></svg>
<div class="t" style="left:53px;top:218.2px;color:#d9d9d9">General (CB)</div>
<svg style="left:37px;top:231.09999999999997px" width="12" height="12" viewBox="0 0 12 12"><path d="M6 .8l4.8 2.4v5.6L6 11.2 1.2 8.8V3.2zM1.2 3.2L6 5.6l4.8-2.4M6 5.6v5.6" stroke="#e3e3e3" stroke-width=".9" fill="none"/></svg>
<div class="t" style="left:53px;top:233.39999999999998px;color:#d9d9d9">Transmission SAXS</div>
<svg style="left:37px;top:246.29999999999995px" width="12" height="12" viewBox="0 0 12 12"><path d="M6 .8l4.8 2.4v5.6L6 11.2 1.2 8.8V3.2zM1.2 3.2L6 5.6l4.8-2.4M6 5.6v5.6" stroke="#e3e3e3" stroke-width=".9" fill="none"/></svg>
<div class="t" style="left:53px;top:248.59999999999997px;color:#d9d9d9">Reflection SAXS</div>
<svg style="left:37px;top:261.49999999999994px" width="12" height="12" viewBox="0 0 12 12"><path d="M6 .8l4.8 2.4v5.6L6 11.2 1.2 8.8V3.2zM1.2 3.2L6 5.6l4.8-2.4M6 5.6v5.6" stroke="#e3e3e3" stroke-width=".9" fill="none"/></svg>
<div class="t" style="left:53px;top:263.79999999999995px;color:#d9d9d9">Micro Area</div>
<svg style="left:37px;top:276.69999999999993px" width="12" height="12" viewBox="0 0 12 12"><path d="M6 .8l4.8 2.4v5.6L6 11.2 1.2 8.8V3.2zM1.2 3.2L6 5.6l4.8-2.4M6 5.6v5.6" stroke="#e3e3e3" stroke-width=".9" fill="none"/></svg>
<div class="t" style="left:53px;top:278.99999999999994px;color:#d9d9d9">Residual Stress</div>
<svg style="left:37px;top:291.8999999999999px" width="12" height="12" viewBox="0 0 12 12"><path d="M6 .8l4.8 2.4v5.6L6 11.2 1.2 8.8V3.2zM1.2 3.2L6 5.6l4.8-2.4M6 5.6v5.6" stroke="#e3e3e3" stroke-width=".9" fill="none"/></svg>
<div class="t" style="left:53px;top:294.19999999999993px;color:#d9d9d9">Reflectivity</div>
<svg style="left:37px;top:307.0999999999999px" width="12" height="12" viewBox="0 0 12 12"><path d="M6 .8l4.8 2.4v5.6L6 11.2 1.2 8.8V3.2zM1.2 3.2L6 5.6l4.8-2.4M6 5.6v5.6" stroke="#e3e3e3" stroke-width=".9" fill="none"/></svg>
<div class="t" style="left:53px;top:309.3999999999999px;color:#d9d9d9">Rocking Curve</div>
<svg style="left:37px;top:322.2999999999999px" width="12" height="12" viewBox="0 0 12 12"><path d="M6 .8l4.8 2.4v5.6L6 11.2 1.2 8.8V3.2zM1.2 3.2L6 5.6l4.8-2.4M6 5.6v5.6" stroke="#e3e3e3" stroke-width=".9" fill="none"/></svg>
<div class="t" style="left:53px;top:324.5999999999999px;color:#d9d9d9">RSM</div>
<div class="a" style="left:22px;top:335px;width:185px;height:19px;background:#e8ebee"></div>
<svg style="left:14px;top:342.5px" width="4" height="4" viewBox="0 0 4 4"><path d="M4 0V4H0z" fill="#444"/></svg>
<div class="t" style="left:28px;top:341.6px;color:#8a8a8a">Utility</div>
<svg style="left:37px;top:356.5px" width="12" height="12" viewBox="0 0 12 12"><path d="M6 .8l4.8 2.4v5.6L6 11.2 1.2 8.8V3.2zM1.2 3.2L6 5.6l4.8-2.4M6 5.6v5.6" stroke="#e3e3e3" stroke-width=".9" fill="none"/></svg>
<div class="t" style="left:53px;top:358.8px;color:#d9d9d9">D/teX Adjustment</div>
<svg style="left:37px;top:371.7px" width="12" height="12" viewBox="0 0 12 12"><path d="M6 .8l4.8 2.4v5.6L6 11.2 1.2 8.8V3.2zM1.2 3.2L6 5.6l4.8-2.4M6 5.6v5.6" stroke="#e3e3e3" stroke-width=".9" fill="none"/></svg>
<div class="t" style="left:53px;top:374.0px;color:#d9d9d9">HyPix Adjustment</div>
<svg style="left:37px;top:386.9px" width="12" height="12" viewBox="0 0 12 12"><path d="M6 .8l4.8 2.4v5.6L6 11.2 1.2 8.8V3.2zM1.2 3.2L6 5.6l4.8-2.4M6 5.6v5.6" stroke="#e3e3e3" stroke-width=".9" fill="none"/></svg>
<div class="t" style="left:53px;top:389.2px;color:#d9d9d9">Attenuator Correction</div>
<svg style="left:37px;top:402.09999999999997px" width="12" height="12" viewBox="0 0 12 12"><path d="M6 .8l4.8 2.4v5.6L6 11.2 1.2 8.8V3.2zM1.2 3.2L6 5.6l4.8-2.4M6 5.6v5.6" stroke="#e3e3e3" stroke-width=".9" fill="none"/></svg>
<div class="t" style="left:53px;top:404.4px;color:#d9d9d9">Maintenance</div>
<div class="a" style="left:22px;top:415px;width:185px;height:19px;background:#e8ebee"></div>
<svg style="left:14px;top:422.5px" width="4" height="4" viewBox="0 0 4 4"><path d="M4 0V4H0z" fill="#444"/></svg>
<div class="t" style="left:28px;top:421.6px;color:#8a8a8a">Administrator</div>
<svg style="left:37px;top:436.5px" width="12" height="12" viewBox="0 0 12 12"><path d="M6 .8l4.8 2.4v5.6L6 11.2 1.2 8.8V3.2zM1.2 3.2L6 5.6l4.8-2.4M6 5.6v5.6" stroke="#e3e3e3" stroke-width=".9" fill="none"/></svg>
<div class="t" style="left:53px;top:438.8px;color:#d9d9d9">Package</div>
<svg style="left:37px;top:451.7px" width="12" height="12" viewBox="0 0 12 12"><path d="M6 .8l4.8 2.4v5.6L6 11.2 1.2 8.8V3.2zM1.2 3.2L6 5.6l4.8-2.4M6 5.6v5.6" stroke="#e3e3e3" stroke-width=".9" fill="none"/></svg>
<div class="t" style="left:53px;top:454.0px;color:#d9d9d9">Package 1</div>
<svg style="left:37px;top:466.9px" width="12" height="12" viewBox="0 0 12 12"><path d="M6 .8l4.8 2.4v5.6L6 11.2 1.2 8.8V3.2zM1.2 3.2L6 5.6l4.8-2.4M6 5.6v5.6" stroke="#e3e3e3" stroke-width=".9" fill="none"/></svg>
<div class="t" style="left:53px;top:469.2px;color:#d9d9d9">kim1</div>
<svg style="left:37px;top:482.09999999999997px" width="12" height="12" viewBox="0 0 12 12"><path d="M6 .8l4.8 2.4v5.6L6 11.2 1.2 8.8V3.2zM1.2 3.2L6 5.6l4.8-2.4M6 5.6v5.6" stroke="#e3e3e3" stroke-width=".9" fill="none"/></svg>
<div class="t" style="left:53px;top:484.4px;color:#d9d9d9">kim2</div>
<svg style="left:37px;top:497.29999999999995px" width="12" height="12" viewBox="0 0 12 12"><path d="M6 .8l4.8 2.4v5.6L6 11.2 1.2 8.8V3.2zM1.2 3.2L6 5.6l4.8-2.4M6 5.6v5.6" stroke="#e3e3e3" stroke-width=".9" fill="none"/></svg>
<div class="t" style="left:53px;top:499.59999999999997px;color:#d9d9d9">kim4</div>
<svg style="left:37px;top:512.5px" width="12" height="12" viewBox="0 0 12 12"><path d="M6 .8l4.8 2.4v5.6L6 11.2 1.2 8.8V3.2zM1.2 3.2L6 5.6l4.8-2.4M6 5.6v5.6" stroke="#e3e3e3" stroke-width=".9" fill="none"/></svg>
<div class="t" style="left:53px;top:514.8px;color:#d9d9d9">kim5</div>
<div class="a" style="left:1px;top:588px;width:212px;height:384px;border:1px solid #dcdcdc;background:#fff"></div>
<div class="t" style="left:23.5px;top:596px;font-size:12.6px;color:#adadad;letter-spacing:-0.3px">Part Activities</div>
<div class="a" style="left:111.5px;top:593px;width:29.5px;height:16px;background:#f2f2f2;border:1px solid #d3d3d3"></div>
<svg style="left:120.25px;top:595.0px" width="12" height="12" viewBox="0 0 12 12"><path d="M3.5 .5h4.5l2.5 2.5V11.5H5.5" stroke="#8a8a8a" stroke-width=".9" fill="none"/><path d="M5 3.5h3M5 5.5h4M6 7.5h3M6 9.5h3" stroke="#9a9a9a" stroke-width=".6"/><path d="M3.5 .5v6" stroke="#9a9a9a" stroke-width=".6" stroke-dasharray="1 .6"/><path d="M0 7l3.5 3.8" stroke="#8a8a8a" stroke-width="1"/><path d="M1.8 11.5H4.6V8.6z" fill="#8a8a8a"/></svg>
<div class="a" style="left:144.2px;top:593px;width:29.5px;height:16px;background:#f2f2f2;border:1px solid #d3d3d3"></div>
<svg style="left:152.95px;top:595.0px" width="12" height="12" viewBox="0 0 12 12"><path d="M6.00 0.30 L4.70 2.86 L1.97 1.97 L2.86 4.70 L0.30 6.00 L2.86 7.30 L1.97 10.03 L4.70 9.14 L6.00 11.70 L7.30 9.14 L10.03 10.03 L9.14 7.30 L11.70 6.00 L9.14 4.70 L10.03 1.97 L7.30 2.86z" fill="#6a6a6a"/><circle cx="6" cy="6" r="3.4" fill="#6a6a6a"/></svg>
<div class="a" style="left:177px;top:593px;width:29.5px;height:16px;background:#e5f1fb;border:1px solid #8bbdec"></div>
<svg style="left:185.75px;top:595.0px" width="12" height="12" viewBox="0 0 12 12"><circle cx="4.8" cy="4.6" r="3.4" stroke="#505050" stroke-width="1.4" fill="none"/><path d="M7.3 7.2l3.6 3.6" stroke="#505050" stroke-width="1.9"/></svg>
<div class="a" style="left:6px;top:616px;width:203px;height:17px;border:1px solid #d5dbe8;background:#fff"></div>
<div class="t" style="left:10px;top:621px;font-style:italic;color:#333">Search</div>
<div class="a" style="left:6px;top:632px;width:203px;height:335px;border:1px solid #c8d0e0;background:#fff"></div>
<div class="a" style="left:195px;top:633px;width:13px;height:320px;background:#efefef"></div>
<div class="a" style="left:7px;top:953px;width:201px;height:13px;background:#efefef"></div>
<svg style="left:199px;top:638px" width="6" height="4" viewBox="0 0 6 4"><path d="M0 3.5L3 .5 6 3.5" stroke="#999" stroke-width=".8" fill="none"/></svg>
<svg style="left:199px;top:945px" width="6" height="4" viewBox="0 0 6 4"><path d="M0 .5L3 3.5 6 .5" stroke="#999" stroke-width=".8" fill="none"/></svg>
<svg style="left:12px;top:956px" width="4" height="7" viewBox="0 0 4 7"><path d="M3.5 0L.5 3.5 3.5 7" stroke="#999" stroke-width=".8" fill="none"/></svg>
<svg style="left:186px;top:956px" width="4" height="7" viewBox="0 0 4 7"><path d="M.5 0L3.5 3.5.5 7" stroke="#999" stroke-width=".8" fill="none"/></svg>
<div class="a" style="left:22px;top:634.5px;width:172px;height:18.3px;background:#e8ebee"></div>
<svg style="left:14px;top:641.65px" width="4" height="4" viewBox="0 0 4 4"><path d="M4 0V4H0z" fill="#444"/></svg>
<div class="t" style="left:28px;top:640.75px;color:#8a8a8a">Alignment Activity</div>
<svg style="left:38px;top:655.9px" width="14" height="12" viewBox="0 0 14 12"><path d="M0 6h4M4 1v10" stroke="#dedede" stroke-width=".8" stroke-dasharray="1.5 .8"/><rect x="6" y="3" width="3.5" height="5" stroke="#e2e2e2" stroke-width=".8" fill="none"/></svg>
<div class="t" style="left:53.5px;top:657.9px;color:#d9d9d9">Optics Alignment (BB)</div>
<svg style="left:38px;top:671.15px" width="14" height="12" viewBox="0 0 14 12"><path d="M0 6h4M4 1v10" stroke="#dedede" stroke-width=".8" stroke-dasharray="1.5 .8"/><rect x="6" y="3" width="3.5" height="5" stroke="#e2e2e2" stroke-width=".8" fill="none"/></svg>
<div class="t" style="left:53.5px;top:673.15px;color:#d9d9d9">Optics Alignment (PB)</div>
<svg style="left:38px;top:686.4px" width="14" height="12" viewBox="0 0 14 12"><path d="M0 6h4M4 1v10" stroke="#dedede" stroke-width=".8" stroke-dasharray="1.5 .8"/><rect x="6" y="3" width="3.5" height="5" stroke="#e2e2e2" stroke-width=".8" fill="none"/></svg>
<div class="t" style="left:53.5px;top:688.4px;color:#d9d9d9">Optics Alignment (CB)</div>
<svg style="left:38px;top:701.65px" width="14" height="12" viewBox="0 0 14 12"><path d="M0 6h4M4 1v10" stroke="#dedede" stroke-width=".8" stroke-dasharray="1.5 .8"/><rect x="6" y="3" width="3.5" height="5" stroke="#e2e2e2" stroke-width=".8" fill="none"/></svg>
<div class="t" style="left:53.5px;top:703.65px;color:#d9d9d9">Optics Alignment (SAXS)</div>
<svg style="left:38px;top:716.9px" width="14" height="12" viewBox="0 0 14 12"><path d="M0 6h4M4 1v10" stroke="#dedede" stroke-width=".8" stroke-dasharray="1.5 .8"/><rect x="6" y="3" width="3.5" height="5" stroke="#e2e2e2" stroke-width=".8" fill="none"/></svg>
<div class="t" style="left:53.5px;top:718.9px;color:#d9d9d9">Optics Alignment (Micro Area)</div>
<svg style="left:38px;top:732.15px" width="14" height="12" viewBox="0 0 14 12"><path d="M0 6h4M4 1v10" stroke="#dedede" stroke-width=".8" stroke-dasharray="1.5 .8"/><rect x="6" y="3" width="3.5" height="5" stroke="#e2e2e2" stroke-width=".8" fill="none"/></svg>
<div class="t" style="left:53.5px;top:734.15px;color:#d9d9d9">Optics Alignment (pseudo PB)</div>
<svg style="left:38px;top:747.4px" width="14" height="12" viewBox="0 0 14 12"><path d="M0 6h4M4 1v10" stroke="#dedede" stroke-width=".8" stroke-dasharray="1.5 .8"/><rect x="6" y="3" width="3.5" height="5" stroke="#e2e2e2" stroke-width=".8" fill="none"/></svg>
<div class="t" style="left:53.5px;top:749.4px;color:#d9d9d9">Optics Alignment (2D-XRD)</div>
<svg style="left:38px;top:762.65px" width="14" height="12" viewBox="0 0 14 12"><path d="M0 6h4M4 1v10" stroke="#dedede" stroke-width=".8" stroke-dasharray="1.5 .8"/><rect x="6" y="3" width="3.5" height="5" stroke="#e2e2e2" stroke-width=".8" fill="none"/></svg>
<div class="t" style="left:53.5px;top:764.65px;color:#d9d9d9">Sample Alignment (Powder, Bulk)</div>
<svg style="left:38px;top:777.9px" width="14" height="12" viewBox="0 0 14 12"><path d="M0 6h4M4 1v10" stroke="#dedede" stroke-width=".8" stroke-dasharray="1.5 .8"/><rect x="6" y="3" width="3.5" height="5" stroke="#e2e2e2" stroke-width=".8" fill="none"/></svg>
<div class="t" style="left:53.5px;top:779.9px;color:#d9d9d9">Sample Alignment (Thin Film)</div>
<svg style="left:38px;top:793.15px" width="14" height="12" viewBox="0 0 14 12"><path d="M0 6h4M4 1v10" stroke="#dedede" stroke-width=".8" stroke-dasharray="1.5 .8"/><rect x="6" y="3" width="3.5" height="5" stroke="#e2e2e2" stroke-width=".8" fill="none"/></svg>
<div class="t" style="left:53.5px;top:795.15px;color:#d9d9d9">Sample Alignment (Transmission)</div>
<svg style="left:38px;top:808.4px" width="14" height="12" viewBox="0 0 14 12"><path d="M0 6h4M4 1v10" stroke="#dedede" stroke-width=".8" stroke-dasharray="1.5 .8"/><rect x="6" y="3" width="3.5" height="5" stroke="#e2e2e2" stroke-width=".8" fill="none"/></svg>
<div class="t" style="left:53.5px;top:810.4px;color:#d9d9d9">Change Optics (BB)</div>
<svg style="left:38px;top:823.65px" width="14" height="12" viewBox="0 0 14 12"><path d="M0 6h4M4 1v10" stroke="#dedede" stroke-width=".8" stroke-dasharray="1.5 .8"/><rect x="6" y="3" width="3.5" height="5" stroke="#e2e2e2" stroke-width=".8" fill="none"/></svg>
<div class="t" style="left:53.5px;top:825.65px;color:#d9d9d9">Change Optics (PB)</div>
<svg style="left:38px;top:838.9px" width="14" height="12" viewBox="0 0 14 12"><path d="M0 6h4M4 1v10" stroke="#dedede" stroke-width=".8" stroke-dasharray="1.5 .8"/><rect x="6" y="3" width="3.5" height="5" stroke="#e2e2e2" stroke-width=".8" fill="none"/></svg>
<div class="t" style="left:53.5px;top:840.9px;color:#d9d9d9">Change Optics (CB)</div>
<svg style="left:38px;top:854.15px" width="14" height="12" viewBox="0 0 14 12"><path d="M0 6h4M4 1v10" stroke="#dedede" stroke-width=".8" stroke-dasharray="1.5 .8"/><rect x="6" y="3" width="3.5" height="5" stroke="#e2e2e2" stroke-width=".8" fill="none"/></svg>
<div class="t" style="left:53.5px;top:856.15px;color:#d9d9d9">Change Optics (SAXS)</div>
<svg style="left:38px;top:869.4px" width="14" height="12" viewBox="0 0 14 12"><path d="M0 6h4M4 1v10" stroke="#dedede" stroke-width=".8" stroke-dasharray="1.5 .8"/><rect x="6" y="3" width="3.5" height="5" stroke="#e2e2e2" stroke-width=".8" fill="none"/></svg>
<div class="t" style="left:53.5px;top:871.4px;color:#d9d9d9">Change Optics (Micro Area)</div>
<svg style="left:38px;top:884.65px" width="14" height="12" viewBox="0 0 14 12"><path d="M0 6h4M4 1v10" stroke="#dedede" stroke-width=".8" stroke-dasharray="1.5 .8"/><rect x="6" y="3" width="3.5" height="5" stroke="#e2e2e2" stroke-width=".8" fill="none"/></svg>
<div class="t" style="left:53.5px;top:886.65px;color:#d9d9d9">Change Optics (pseudo PB)</div>
<div class="a" style="left:22px;top:897px;width:172px;height:18.5px;background:#e8ebee"></div>
<svg style="left:14px;top:904.25px" width="4" height="4" viewBox="0 0 4 4"><path d="M4 0V4H0z" fill="#444"/></svg>
<div class="t" style="left:28px;top:903.35px;color:#8a8a8a">Measurement Activity</div>
<svg style="left:38px;top:918.5px" width="12" height="12" viewBox="0 0 12 12"><path d="M1 0v11h11M2 9l2-3 2 2 2-5 2 6" stroke="#e0e0e0" stroke-width=".8" fill="none"/></svg>
<div class="t" style="left:53.5px;top:920.5px;color:#dadada">General Measurement (BB)</div>
<svg style="left:38px;top:933.75px" width="12" height="12" viewBox="0 0 12 12"><path d="M1 0v11h11M2 9l2-3 2 2 2-5 2 6" stroke="#e0e0e0" stroke-width=".8" fill="none"/></svg>
<div class="t" style="left:53.5px;top:935.75px;color:#dadada">General Measurement</div>
<div class="a" style="left:7px;top:948px;width:188px;height:5px;background:#fff"></div>
<div class="a" style="left:218px;top:109px;width:340px;height:863px;border:1px solid #dadada;background:#fff"></div>
<div class="t" style="left:240px;top:116.5px;font-size:12.6px;color:#4c9be6;letter-spacing:-0.3px">Flow Editor</div>
<svg style="left:515.2px;top:118.8px" width="4" height="7" viewBox="0 0 4 7"><path d="M.5 1.2Q1.5 0 2.6.6 3.6 1.4 2.8 2.6 2 3.4 2 4.6" stroke="#222" stroke-width="1" fill="none"/><rect x="1.5" y="5.6" width="1.1" height="1.2" fill="#222"/></svg>
<svg style="left:528.5px;top:118px" width="6" height="7" viewBox="0 0 6 7"><rect x="1" y=".3" width="4" height="4.2" fill="none" stroke="#333" stroke-width=".8"/><rect x="2.5" y=".5" width="1" height="4" fill="#333"/><path d="M0 4.6h6M3 4.6V7" stroke="#333" stroke-width=".9"/></svg>
<svg style="left:541.0px;top:118px" width="6" height="6" viewBox="0 0 6 6"><path d="M.4 .4L5.6 5.6M5.6 .4L.4 5.6" stroke="#333" stroke-width="1.1"/></svg>
<div class="a" style="left:220px;top:135px;width:335px;height:836px;border:1px solid #dcdcdc;background:#fff"></div>
<div class="a" style="left:224.3px;top:137.3px;width:29.3px;height:16px;background:#f3f3f3;border:1px solid #dcdcdc"></div>
<svg style="left:232.95000000000002px;top:139.3px" width="12" height="12" viewBox="0 0 12 12"><path d="M3.5 .3H.3V4M.3 7V11.7H3.5M5.5 .3H9V5" stroke="#999" stroke-width=".9" fill="none"/><path d="M2 3.3h4M2 6.2h4M2 9.2h4" stroke="#8a8a8a" stroke-width="1.1"/><path d="M7.4 5.6L12 8.6 7.4 11.6z" fill="#999"/></svg>
<div class="a" style="left:257.1px;top:137.3px;width:29.3px;height:16px;background:#f3f3f3;border:1px solid #dcdcdc"></div>
<svg style="left:265.75px;top:139.3px" width="12" height="12" viewBox="0 0 12 12"><path d="M3.5 .3H.3V4M.3 7V11.7H3.5M5.5 .3H9V5" stroke="#999" stroke-width=".9" fill="none"/><path d="M2 3.3h4M2 6.2h4M2 9.2h4" stroke="#8a8a8a" stroke-width="1.1"/><path d="M7.4 5.6L12 8.6 7.4 11.6z" fill="#999"/></svg>
<div class="a" style="left:289.9px;top:137.3px;width:29.3px;height:16px;background:#f3f3f3;border:1px solid #dcdcdc"></div>
<svg style="left:298.54999999999995px;top:139.3px" width="12" height="12" viewBox="0 0 12 12"><path d="M3.5 .3H.3V4M.3 7V11.7H3.5M5.5 .3H9V5" stroke="#999" stroke-width=".9" fill="none"/><path d="M2 3.3h4M2 6.2h4M2 9.2h4" stroke="#8a8a8a" stroke-width="1.1"/><path d="M7.4 5.6L12 8.6 7.4 11.6z" fill="#999"/></svg>
<div class="a" style="left:489.2px;top:137.3px;width:28.5px;height:15.6px;background:#f3f3f3;border:1px solid #dcdcdc"></div>
<svg style="left:497.45px;top:139.10000000000002px" width="12" height="12" viewBox="0 0 12 12"><path d="M9.22 5.04 L10.65 5.10 L10.65 6.50 L9.22 6.56 L8.42 8.24 L9.26 9.39 L8.17 10.26 L7.23 9.19 L5.41 9.60 L5.03 10.98 L3.67 10.67 L3.93 9.26 L2.48 8.10 L1.16 8.66 L0.55 7.41 L1.82 6.73 L1.82 4.87 L0.55 4.19 L1.16 2.94 L2.48 3.50 L3.93 2.34 L3.67 0.93 L5.03 0.62 L5.41 2.00 L7.23 2.41 L8.17 1.34 L9.26 2.21 L8.42 3.36z" fill="#8c8c8c"/><circle cx="5.5" cy="5.8" r="2" fill="#f2f2f2"/><circle cx="5.5" cy="5.8" r=".8" fill="#8c8c8c"/><path d="M9 8.2v4.6M6.7 10.5h4.6" stroke="#f2f2f2" stroke-width="2.2"/><path d="M9 8.4v4.2M6.9 10.5h4.2" stroke="#8c8c8c" stroke-width=".9"/></svg>
<div class="a" style="left:522.1px;top:137.3px;width:28.5px;height:15.6px;background:#f3f3f3;border:1px solid #dcdcdc"></div>
<svg style="left:530.35px;top:139.10000000000002px" width="12" height="12" viewBox="0 0 12 12"><path d="M9.22 5.04 L10.65 5.10 L10.65 6.50 L9.22 6.56 L8.42 8.24 L9.26 9.39 L8.17 10.26 L7.23 9.19 L5.41 9.60 L5.03 10.98 L3.67 10.67 L3.93 9.26 L2.48 8.10 L1.16 8.66 L0.55 7.41 L1.82 6.73 L1.82 4.87 L0.55 4.19 L1.16 2.94 L2.48 3.50 L3.93 2.34 L3.67 0.93 L5.03 0.62 L5.41 2.00 L7.23 2.41 L8.17 1.34 L9.26 2.21 L8.42 3.36z" fill="none" stroke="#9a9a9a" stroke-width=".7"/><circle cx="5.5" cy="5.8" r=".9" fill="#9a9a9a"/><path d="M9 8.2v4.6M6.7 10.5h4.6" stroke="#f2f2f2" stroke-width="2.2"/><path d="M9 8.4v4.2M6.9 10.5h4.2" stroke="#9a9a9a" stroke-width=".9"/></svg>
<div class="a" style="left:224px;top:175px;width:327px;height:1px;background:#c8d0e4"></div>
<div class="a" style="left:272px;top:501px;width:232px;height:141px;border:1px solid #d5dbe5;background:#fff"></div>
<div class="a" style="left:273px;top:502px;width:230px;height:18px;background:#e8ebee"></div>
<svg style="left:274px;top:504px" width="12" height="13" viewBox="0 0 12 13"><path d="M5 0h2v2H5zM5 11h2v2H5z" fill="#8a7a50"/><rect x=".5" y="2.5" width="11" height="8" rx="1" fill="#ecd24e" stroke="#a89040" stroke-width=".7"/><rect x="1.5" y="3.5" width="9" height="3" fill="#f8ec9c"/></svg>
<div class="t" style="left:290.5px;top:506px;color:#1e1e1e;font-size:8.65px">General (BB)</div>
<svg style="left:489.5px;top:504.5px" width="11" height="11" viewBox="0 0 11 11"><circle cx="5.5" cy="5.5" r="5.5" fill="#a10d0d"/><path d="M5.5 2v4.3" stroke="#fff" stroke-width="1.6"/><circle cx="5.5" cy="8.2" r=".9" fill="#fff"/></svg>
<svg style="left:381.6px;top:522.5px" width="12" height="8" viewBox="0 0 12 8"><path d="M.6 .5h10.8L6 7.3z" stroke="#8ea0b6" stroke-width=".8" fill="none"/></svg>
<div class="a" style="left:275px;top:534px;width:226px;height:21px;background:#fde49e;border:1px solid #ebc86b;border-radius:2px"></div>
<svg style="left:277px;top:538px" width="13" height="13" viewBox="0 0 13 13"><path d="M0 6.5h8M4 1v11" stroke="#444" stroke-width=".8"/><rect x="7" y="4" width="4" height="5" stroke="#444" stroke-width=".8" fill="none"/></svg>
<div class="t" style="left:293.5px;top:540px;color:#1e1e1e;font-size:8.65px">Optics Alignment (BB)</div>
<svg style="left:484px;top:538.5px" width="12" height="12" viewBox="0 0 12 12"><circle cx="6" cy="6" r="5.3" stroke="#bdbdbd" stroke-width=".9" fill="none"/><path d="M4.2 4.6a1.8 1.8 0 1 1 2.6 1.6c-.5.3-.8.6-.8 1.3" stroke="#bdbdbd" stroke-width=".9" fill="none"/><circle cx="6" cy="9" r=".6" fill="#bdbdbd"/></svg>
<svg style="left:381.6px;top:558.5px" width="12" height="8" viewBox="0 0 12 8"><path d="M.6 .5h10.8L6 7.3z" stroke="#8ea0b6" stroke-width=".8" fill="none"/></svg>
<div class="a" style="left:275px;top:569.5px;width:226px;height:20px;background:#e8ebee;border:1px solid #d8dde5;border-radius:2px"></div>
<svg style="left:277px;top:573px" width="13" height="13" viewBox="0 0 13 13"><path d="M0 6.5h8M4 1v11" stroke="#444" stroke-width=".8"/><rect x="7" y="4" width="4" height="5" stroke="#444" stroke-width=".8" fill="none"/></svg>
<div class="t" style="left:293.5px;top:575px;color:#1e1e1e;font-size:8.65px">Sample Alignment (Powder, Bulk)</div>
<svg style="left:484px;top:573.5px" width="12" height="12" viewBox="0 0 12 12"><circle cx="6" cy="6" r="5.3" stroke="#bdbdbd" stroke-width=".9" fill="none"/><path d="M4.2 4.6a1.8 1.8 0 1 1 2.6 1.6c-.5.3-.8.6-.8 1.3" stroke="#bdbdbd" stroke-width=".9" fill="none"/><circle cx="6" cy="9" r=".6" fill="#bdbdbd"/></svg>
<svg style="left:381.6px;top:594px" width="12" height="8" viewBox="0 0 12 8"><path d="M.6 .5h10.8L6 7.3z" stroke="#8ea0b6" stroke-width=".8" fill="none"/></svg>
<div class="a" style="left:275px;top:605px;width:226px;height:20.5px;background:#e8ebee;border:1px solid #d8dde5;border-radius:2px"></div>
<svg style="left:277px;top:608px" width="13" height="13" viewBox="0 0 13 13"><path d="M1 0v12h12M2.5 10l2.5-3.5 2.5 2 2-5.5 2.5 7" stroke="#555" stroke-width=".9" fill="none"/></svg>
<div class="t" style="left:293.5px;top:611px;color:#1e1e1e;font-size:8.65px">General Measurement (BB)</div>
<svg style="left:471.0px;top:610.0px" width="11" height="11" viewBox="0 0 11 11"><circle cx="5.5" cy="5.5" r="5.5" fill="#a10d0d"/><path d="M5.5 2v4.3" stroke="#fff" stroke-width="1.6"/><circle cx="5.5" cy="8.2" r=".9" fill="#fff"/></svg>
<svg style="left:484px;top:609.5px" width="12" height="12" viewBox="0 0 12 12"><circle cx="6" cy="6" r="5.3" stroke="#bdbdbd" stroke-width=".9" fill="none"/><path d="M4.2 4.6a1.8 1.8 0 1 1 2.6 1.6c-.5.3-.8.6-.8 1.3" stroke="#bdbdbd" stroke-width=".9" fill="none"/><circle cx="6" cy="9" r=".6" fill="#bdbdbd"/></svg>
<svg style="left:381.6px;top:630px" width="12" height="8" viewBox="0 0 12 8"><path d="M.6 .5h10.8L6 7.3z" stroke="#8ea0b6" stroke-width=".8" fill="none"/></svg>
<div class="a" style="left:560px;top:109px;width:968px;height:499px;border:1px solid #dadada;background:#fff"></div>
<div class="t" style="left:582px;top:116.5px;font-size:12.6px;color:#a9a9a9;letter-spacing:-0.3px">Display Area</div>
<svg style="left:1498.7px;top:118.8px" width="4" height="7" viewBox="0 0 4 7"><path d="M.5 1.2Q1.5 0 2.6.6 3.6 1.4 2.8 2.6 2 3.4 2 4.6" stroke="#222" stroke-width="1" fill="none"/><rect x="1.5" y="5.6" width="1.1" height="1.2" fill="#222"/></svg>
<svg style="left:1512px;top:118px" width="6" height="7" viewBox="0 0 6 7"><rect x="1" y=".3" width="4" height="4.2" fill="none" stroke="#333" stroke-width=".8"/><rect x="2.5" y=".5" width="1" height="4" fill="#333"/><path d="M0 4.6h6M3 4.6V7" stroke="#333" stroke-width=".9"/></svg>
<div class="a" style="left:561px;top:133px;width:966px;height:474px;background:#d4d4d4"></div>
<div class="a" style="left:560px;top:611px;width:968px;height:361px;border:1px solid #dadada;background:#fff"></div>
<div class="t" style="left:581.5px;top:618.5px;font-size:12.6px;color:#a9a9a9;letter-spacing:-0.3px">XG Control</div>
<svg style="left:1486.7px;top:621.8px" width="4" height="7" viewBox="0 0 4 7"><path d="M.5 1.2Q1.5 0 2.6.6 3.6 1.4 2.8 2.6 2 3.4 2 4.6" stroke="#222" stroke-width="1" fill="none"/><rect x="1.5" y="5.6" width="1.1" height="1.2" fill="#222"/></svg>
<svg style="left:1500px;top:621px" width="6" height="7" viewBox="0 0 6 7"><rect x="1" y=".3" width="4" height="4.2" fill="none" stroke="#333" stroke-width=".8"/><rect x="2.5" y=".5" width="1" height="4" fill="#333"/><path d="M0 4.6h6M3 4.6V7" stroke="#333" stroke-width=".9"/></svg>
<svg style="left:1512.5px;top:621px" width="6" height="6" viewBox="0 0 6 6"><path d="M.4 .4L5.6 5.6M5.6 .4L.4 5.6" stroke="#333" stroke-width="1.1"/></svg>
<div class="a" style="left:565px;top:639px;width:500px;height:16px;border:1px solid #c8c8c8;background:#fff"></div>
<div class="t" style="left:573px;top:643px;color:#262626;font-size:8.65px">XG control</div>
<div class="a" style="left:566px;top:681px;width:500px;height:14px;background:#eeeeee"></div>
<div class="t" style="left:670px;top:684.5px;color:#888;font-size:8.65px">ff</div>
<div class="a" style="left:566px;top:716px;width:500px;height:14px;background:#eeeeee"></div>
<div class="t" style="left:670px;top:719.5px;color:#888;font-size:8.65px">ff</div>
<div class="t" style="left:668px;top:754px;color:#ccc;font-size:8.65px">t</div>
<div class="a" style="left:640px;top:750px;width:48px;height:15px;border:1px solid #cfcfcf;background:#fff"></div>
<div class="a" style="left:640px;top:768px;width:48px;height:15px;border:1px solid #cfcfcf;background:#fff"></div>
<div class="a" style="left:690px;top:768px;width:10px;height:15px;border:1px solid #cfcfcf;background:#fff"></div>
<svg style="left:678px;top:752px" width="7" height="11" viewBox="0 0 7 11"><path d="M.5 4L3.5 1 6.5 4M.5 7l3 3 3-3" stroke="#888" stroke-width=".8" fill="none"/></svg>
<svg style="left:678px;top:770px" width="7" height="11" viewBox="0 0 7 11"><path d="M.5 4L3.5 1 6.5 4M.5 7l3 3 3-3" stroke="#888" stroke-width=".8" fill="none"/></svg>
<div class="a" style="left:561px;top:956px;width:966px;height:17px;background:#d6d6d6"></div>
<div class="a" style="left:628px;top:956px;width:66px;height:17px;background:#fff"></div>
<div class="t" style="left:571.5px;top:960.5px;color:#262626;font-size:8.65px">Pro Control</div>
<div class="t" style="left:639.5px;top:960.5px;color:#2e7dd0;font-size:8.65px">XG Control</div>
<div class="t" style="left:706px;top:960.5px;color:#262626;font-size:8.65px">Initialize</div>
<div class="t" style="left:761.5px;top:960.5px;color:#262626;font-size:8.65px">Optics Management</div>
<div class="t" style="left:865px;top:960.5px;color:#262626;font-size:8.65px">Data Browser</div>
<div class="t" style="left:940px;top:960.5px;color:#262626;font-size:8.65px">Startup/Shutdown</div>
<div class="a" style="left:1531px;top:109px;width:302px;height:864px;border:1px solid #dadada;background:#fff"></div>
<div class="t" style="left:1553px;top:116.5px;font-size:12.6px;color:#a9a9a9;letter-spacing:-0.3px">H/W Status</div>
<svg style="left:1791.7px;top:118.8px" width="4" height="7" viewBox="0 0 4 7"><path d="M.5 1.2Q1.5 0 2.6.6 3.6 1.4 2.8 2.6 2 3.4 2 4.6" stroke="#222" stroke-width="1" fill="none"/><rect x="1.5" y="5.6" width="1.1" height="1.2" fill="#222"/></svg>
<svg style="left:1805px;top:118px" width="6" height="7" viewBox="0 0 6 7"><rect x="1" y=".3" width="4" height="4.2" fill="none" stroke="#333" stroke-width=".8"/><rect x="2.5" y=".5" width="1" height="4" fill="#333"/><path d="M0 4.6h6M3 4.6V7" stroke="#333" stroke-width=".9"/></svg>
<svg style="left:1817.5px;top:118px" width="6" height="6" viewBox="0 0 6 6"><path d="M.4 .4L5.6 5.6M5.6 .4L.4 5.6" stroke="#333" stroke-width="1.1"/></svg>
<div class="a" style="left:0px;top:975px;width:1840px;height:2px;background:#e0e0e0"></div>
<svg width="0" height="0" style="position:absolute"><defs>
<linearGradient id="gb" x1="0" y1="0" x2="0" y2="1"><stop offset="0" stop-color="#a9c6f2"/><stop offset="1" stop-color="#3a7be6"/></linearGradient>
<linearGradient id="gr" x1="0" y1="0" x2="0" y2="1"><stop offset="0" stop-color="#f5b0b0"/><stop offset="1" stop-color="#e81c1c"/></linearGradient>
<linearGradient id="gm" x1="0" y1="0" x2="1" y2="0"><stop offset="0" stop-color="#4a4a4a"/><stop offset=".55" stop-color="#eeeeee"/><stop offset="1" stop-color="#4a4a4a"/></linearGradient>
<linearGradient id="gp" x1="0" y1="0" x2="0" y2="1"><stop offset="0" stop-color="#3c3c3c"/><stop offset=".55" stop-color="#e0e0e0"/><stop offset="1" stop-color="#4a4a4a"/></linearGradient>
<g id="stand"><rect x="0" y="0" width="17" height="4" rx=".8" fill="url(#gp)"/><rect x="5" y="4" width="8" height="5.5" fill="url(#gm)"/><rect x="4" y="9.5" width="10" height="2" fill="#4a4a4a"/></g>
<g id="tstand"><rect x="0" y="0" width="7.5" height="3" fill="#4a4a4a"/><rect x="1" y="3" width="5.5" height="6.5" fill="url(#gm)"/><rect x=".3" y="9.5" width="7" height="2" fill="#4a4a4a"/></g>
</defs></svg>
<div class="a" style="left:694px;top:127px;width:467px;height:711px;background:#f9f9f9;border:1px solid #3b8fd5;border-bottom-color:#2c6aa0;box-shadow:1px 1px 4px rgba(0,0,0,.15)"></div>
<div class="t c" style="left:927px;top:136px;font-size:11px;color:#333">Smart Message</div>
<div class="a" style="left:703px;top:152px;width:16px;height:16px;background:#fff;border:1px solid #666"></div>
<svg style="left:704.5px;top:154.5px" width="13" height="11" viewBox="0 0 13 11"><path d="M0 3.5h2.5L6.5 0v11L2.5 7.5H0z" fill="#111"/><path d="M8 3.5l4 4M12 3.5l-4 4" stroke="#111" stroke-width="1.1"/></svg>
<div class="a" style="left:723px;top:152px;width:429px;height:652px;background:#fafafa;border:1px solid #8fb3d0;border-bottom-color:#a9c0d0"></div>
<div class="t" style="left:727px;top:175.6px;font-size:8.7px;letter-spacing:-0.1px"><span style="color:#222;">Install </span><span style="color:#1c8a28;font-weight:bold;">Height reference sample plate</span><span style="color:#262640;"> in </span><span style="color:#1a1a1a;font-weight:bold;">standard attachment head.</span></div>
<svg style="left:786px;top:198px" width="204" height="30" viewBox="0 0 204 30">
<path d="M.6 28.5V7a6 6 0 0 1 12 0v21.5z" fill="url(#gm)" stroke="#444" stroke-width=".5"/>
<rect x="12.5" y="3.4" width="4.8" height="11.3" fill="url(#gm)"/>
<circle cx="6.6" cy="7.2" r="4.6" fill="#ffe800" stroke="#222" stroke-width=".6"/>
<path d="M6.6 7.2L4.3 3.3A4.5 4.5 0 0 1 8.9 3.3zM6.6 7.2L11.1 7.2A4.5 4.5 0 0 1 8.9 11.1zM6.6 7.2L4.3 11.1A4.5 4.5 0 0 1 2.1 7.2z" fill="#111"/>
<circle cx="6.6" cy="7.2" r=".9" fill="#ffe800"/>
<rect x="17.3" y="1" width="16.7" height="16" fill="url(#gb)"/>
<rect x="37" y="1" width="13.8" height="16" fill="url(#gb)"/>
<use href="#stand" x="35" y="17"/>
<rect x="55" y="1" width="4.8" height="19" fill="url(#gb)"/>
<use href="#tstand" x="53.6" y="17"/>
<rect x="83.7" y="10" width="19.1" height="7" fill="url(#gb)"/>
<rect x="76" y="17" width="34.6" height="4.5" fill="url(#gp)"/>
<rect x="81" y="21.5" width="24.8" height="7" fill="url(#gm)"/>
<rect x="125.5" y="1" width="5.3" height="19" fill="url(#gb)"/><use href="#tstand" x="124.5" y="17"/>
<rect x="135" y="1" width="14" height="16" fill="url(#gb)"/><use href="#stand" x="133.5" y="17"/>
<rect x="153.6" y="1" width="13.4" height="16" fill="url(#gb)"/><use href="#stand" x="151.8" y="17"/>
<rect x="171.8" y="1" width="4.8" height="19" fill="url(#gb)"/><use href="#tstand" x="170.5" y="17"/>
<rect x="181" y="1" width="5" height="19" fill="url(#gb)"/><use href="#tstand" x="179.8" y="17"/>
<rect x="189" y="1" width="14" height="16" fill="url(#gb)"/>
<rect x="191.5" y="17" width="9" height="10" fill="url(#gm)"/><rect x="190" y="26.5" width="12" height="2" fill="#555"/>
</svg>
<div class="t" style="left:727px;top:270.6px;font-size:8.7px;letter-spacing:-0.1px"><span style="color:#222;">Insert </span><span style="color:#1c8a28;font-weight:bold;">center slit</span><span style="color:#262640;"> in </span><span style="color:#1a1a1a;font-weight:bold;">Height reference sample plate.</span></div>
<svg style="left:786px;top:293px" width="204" height="30" viewBox="0 0 204 30">
<path d="M.6 28.5V7a6 6 0 0 1 12 0v21.5z" fill="url(#gm)" stroke="#444" stroke-width=".5"/>
<rect x="12.5" y="3.4" width="4.8" height="11.3" fill="url(#gm)"/>
<circle cx="6.6" cy="7.2" r="4.6" fill="#ffe800" stroke="#222" stroke-width=".6"/>
<path d="M6.6 7.2L4.3 3.3A4.5 4.5 0 0 1 8.9 3.3zM6.6 7.2L11.1 7.2A4.5 4.5 0 0 1 8.9 11.1zM6.6 7.2L4.3 11.1A4.5 4.5 0 0 1 2.1 7.2z" fill="#111"/>
<circle cx="6.6" cy="7.2" r=".9" fill="#ffe800"/>
<rect x="17.3" y="1" width="16.7" height="16" fill="url(#gb)"/>
<rect x="37" y="1" width="13.8" height="16" fill="url(#gb)"/>
<use href="#stand" x="35" y="17"/>
<rect x="55" y="1" width="4.8" height="19" fill="url(#gb)"/>
<use href="#tstand" x="53.6" y="17"/>
<rect x="83.7" y="10" width="19.1" height="7" fill="url(#gb)"/>
<rect x="76" y="17" width="34.6" height="4.5" fill="url(#gp)"/>
<rect x="81" y="21.5" width="24.8" height="7" fill="url(#gm)"/>
<rect x="125.5" y="1" width="5.3" height="19" fill="url(#gb)"/><use href="#tstand" x="124.5" y="17"/>
<rect x="135" y="1" width="14" height="16" fill="url(#gb)"/><use href="#stand" x="133.5" y="17"/>
<rect x="153.6" y="1" width="13.4" height="16" fill="url(#gb)"/><use href="#stand" x="151.8" y="17"/>
<rect x="171.8" y="1" width="4.8" height="19" fill="url(#gb)"/><use href="#tstand" x="170.5" y="17"/>
<rect x="181" y="1" width="5" height="19" fill="url(#gb)"/><use href="#tstand" x="179.8" y="17"/>
<rect x="189" y="1" width="14" height="16" fill="url(#gb)"/>
<rect x="191.5" y="17" width="9" height="10" fill="url(#gm)"/><rect x="190" y="26.5" width="12" height="2" fill="#555"/>
</svg>
<div class="t" style="left:727px;top:365.1px;font-size:8.7px;letter-spacing:-0.1px"><span style="color:#222;">Remove the </span><span style="color:#e8171c;font-weight:bold;">ROD adaptor</span><span style="color:#222;">.</span></div>
<svg style="left:786px;top:392px" width="204" height="30" viewBox="0 0 204 30">
<path d="M.6 28.5V7a6 6 0 0 1 12 0v21.5z" fill="url(#gm)" stroke="#444" stroke-width=".5"/>
<rect x="12.5" y="3.4" width="4.8" height="11.3" fill="url(#gm)"/>
<circle cx="6.6" cy="7.2" r="4.6" fill="#ffe800" stroke="#222" stroke-width=".6"/>
<path d="M6.6 7.2L4.3 3.3A4.5 4.5 0 0 1 8.9 3.3zM6.6 7.2L11.1 7.2A4.5 4.5 0 0 1 8.9 11.1zM6.6 7.2L4.3 11.1A4.5 4.5 0 0 1 2.1 7.2z" fill="#111"/>
<circle cx="6.6" cy="7.2" r=".9" fill="#ffe800"/>
<rect x="17.3" y="1" width="16.7" height="16" fill="url(#gr)"/>
<rect x="37" y="1" width="13.8" height="16" fill="url(#gr)"/>
<use href="#stand" x="35" y="17"/>
<rect x="55" y="1" width="4.8" height="19" fill="url(#gr)"/>
<use href="#tstand" x="53.6" y="17"/>
<rect x="83.7" y="10" width="19.1" height="7" fill="url(#gr)"/>
<rect x="76" y="17" width="34.6" height="4.5" fill="url(#gp)"/>
<rect x="81" y="21.5" width="24.8" height="7" fill="url(#gm)"/>
<rect x="125.5" y="1" width="5.3" height="19" fill="url(#gr)"/><use href="#tstand" x="124.5" y="17"/>
<rect x="135" y="1" width="14" height="16" fill="url(#gr)"/><use href="#stand" x="133.5" y="17"/>
<rect x="153.6" y="1" width="13.4" height="16" fill="url(#gr)"/><use href="#stand" x="151.8" y="17"/>
<rect x="171.8" y="1" width="4.8" height="19" fill="url(#gr)"/><use href="#tstand" x="170.5" y="17"/>
<rect x="181" y="1" width="5" height="19" fill="url(#gr)"/><use href="#tstand" x="179.8" y="17"/>
<rect x="189" y="1" width="14" height="16" fill="url(#gr)"/>
<rect x="191.5" y="17" width="9" height="10" fill="url(#gm)"/><rect x="190" y="26.5" width="12" height="2" fill="#555"/>
</svg>
<div class="t" style="left:727px;top:469.6px;font-size:8.7px;letter-spacing:-0.1px"><span style="color:#222;">Replace </span><span style="color:#e8171c;font-weight:bold;">Soller slit 2.5°</span><span style="color:#222;"> with </span><span style="color:#1c8a28;font-weight:bold;">Soller slit 2.5° (wide)</span><span style="color:#262640;"> in </span><span style="color:#1a1a1a;font-weight:bold;">RPS adaptor.</span></div>
<svg style="left:786px;top:494px" width="204" height="30" viewBox="0 0 204 30">
<path d="M.6 28.5V7a6 6 0 0 1 12 0v21.5z" fill="url(#gm)" stroke="#444" stroke-width=".5"/>
<rect x="12.5" y="3.4" width="4.8" height="11.3" fill="url(#gm)"/>
<circle cx="6.6" cy="7.2" r="4.6" fill="#ffe800" stroke="#222" stroke-width=".6"/>
<path d="M6.6 7.2L4.3 3.3A4.5 4.5 0 0 1 8.9 3.3zM6.6 7.2L11.1 7.2A4.5 4.5 0 0 1 8.9 11.1zM6.6 7.2L4.3 11.1A4.5 4.5 0 0 1 2.1 7.2z" fill="#111"/>
<circle cx="6.6" cy="7.2" r=".9" fill="#ffe800"/>
<rect x="17.3" y="1" width="16.7" height="16" fill="url(#gb)"/>
<rect x="37" y="1" width="13.8" height="16" fill="url(#gb)"/>
<use href="#stand" x="35" y="17"/>
<rect x="55" y="1" width="4.8" height="19" fill="url(#gb)"/>
<use href="#tstand" x="53.6" y="17"/>
<rect x="83.7" y="10" width="19.1" height="7" fill="url(#gb)"/>
<rect x="76" y="17" width="34.6" height="4.5" fill="url(#gp)"/>
<rect x="81" y="21.5" width="24.8" height="7" fill="url(#gm)"/>
<rect x="125.5" y="1" width="5.3" height="19" fill="url(#gb)"/><use href="#tstand" x="124.5" y="17"/>
<rect x="135" y="1" width="14" height="16" fill="url(#gb)"/><use href="#stand" x="133.5" y="17"/>
<rect x="153.6" y="1" width="13.4" height="16" fill="url(#gb)"/><use href="#stand" x="151.8" y="17"/>
<rect x="171.8" y="1" width="4.8" height="19" fill="url(#gb)"/><use href="#tstand" x="170.5" y="17"/>
<rect x="181" y="1" width="5" height="19" fill="url(#gb)"/><use href="#tstand" x="179.8" y="17"/>
<rect x="189" y="1" width="14" height="16" fill="url(#gb)"/>
<rect x="191.5" y="17" width="9" height="10" fill="url(#gm)"/><rect x="190" y="26.5" width="12" height="2" fill="#555"/>
</svg>
<div class="t" style="left:727px;top:569.1px;font-size:8.7px;letter-spacing:-0.1px"><span style="color:#222;">Install </span><span style="color:#1c8a28;font-weight:bold;">attenuator for Cu</span><span style="color:#262640;"> in </span><span style="color:#1a1a1a;font-weight:bold;">receiving side of diffractometer.</span></div>
<svg style="left:786px;top:605px" width="204" height="30" viewBox="0 0 204 30">
<path d="M.6 28.5V7a6 6 0 0 1 12 0v21.5z" fill="url(#gm)" stroke="#444" stroke-width=".5"/>
<rect x="12.5" y="3.4" width="4.8" height="11.3" fill="url(#gm)"/>
<circle cx="6.6" cy="7.2" r="4.6" fill="#ffe800" stroke="#222" stroke-width=".6"/>
<path d="M6.6 7.2L4.3 3.3A4.5 4.5 0 0 1 8.9 3.3zM6.6 7.2L11.1 7.2A4.5 4.5 0 0 1 8.9 11.1zM6.6 7.2L4.3 11.1A4.5 4.5 0 0 1 2.1 7.2z" fill="#111"/>
<circle cx="6.6" cy="7.2" r=".9" fill="#ffe800"/>
<rect x="17.3" y="1" width="16.7" height="16" fill="url(#gb)"/>
<rect x="37" y="1" width="13.8" height="16" fill="url(#gb)"/>
<use href="#stand" x="35" y="17"/>
<rect x="55" y="1" width="4.8" height="19" fill="url(#gb)"/>
<use href="#tstand" x="53.6" y="17"/>
<rect x="83.7" y="10" width="19.1" height="7" fill="url(#gb)"/>
<rect x="76" y="17" width="34.6" height="4.5" fill="url(#gp)"/>
<rect x="81" y="21.5" width="24.8" height="7" fill="url(#gm)"/>
<rect x="125.5" y="1" width="5.3" height="19" fill="url(#gb)"/><use href="#tstand" x="124.5" y="17"/>
<rect x="135" y="1" width="14" height="16" fill="url(#gb)"/><use href="#stand" x="133.5" y="17"/>
<rect x="153.6" y="1" width="13.4" height="16" fill="url(#gb)"/><use href="#stand" x="151.8" y="17"/>
<rect x="171.8" y="1" width="4.8" height="19" fill="url(#gb)"/><use href="#tstand" x="170.5" y="17"/>
<rect x="181" y="1" width="5" height="19" fill="url(#gb)"/><use href="#tstand" x="179.8" y="17"/>
<rect x="189" y="1" width="14" height="16" fill="url(#gb)"/>
<rect x="191.5" y="17" width="9" height="10" fill="url(#gm)"/><rect x="190" y="26.5" width="12" height="2" fill="#555"/>
</svg>
<div class="t" style="left:727px;top:691.6px;font-size:8.7px;letter-spacing:-0.1px"><span style="color:#222;">Install </span><span style="color:#1c8a28;font-weight:bold;">D/teX Ultra 250</span><span style="color:#262640;"> in </span><span style="color:#1a1a1a;font-weight:bold;">detector adaptor.</span></div>
<svg style="left:786px;top:714px" width="204" height="30" viewBox="0 0 204 30">
<path d="M.6 28.5V7a6 6 0 0 1 12 0v21.5z" fill="url(#gm)" stroke="#444" stroke-width=".5"/>
<rect x="12.5" y="3.4" width="4.8" height="11.3" fill="url(#gm)"/>
<circle cx="6.6" cy="7.2" r="4.6" fill="#ffe800" stroke="#222" stroke-width=".6"/>
<path d="M6.6 7.2L4.3 3.3A4.5 4.5 0 0 1 8.9 3.3zM6.6 7.2L11.1 7.2A4.5 4.5 0 0 1 8.9 11.1zM6.6 7.2L4.3 11.1A4.5 4.5 0 0 1 2.1 7.2z" fill="#111"/>
<circle cx="6.6" cy="7.2" r=".9" fill="#ffe800"/>
<rect x="17.3" y="1" width="16.7" height="16" fill="url(#gb)"/>
<rect x="37" y="1" width="13.8" height="16" fill="url(#gb)"/>
<use href="#stand" x="35" y="17"/>
<rect x="55" y="1" width="4.8" height="19" fill="url(#gb)"/>
<use href="#tstand" x="53.6" y="17"/>
<rect x="83.7" y="10" width="19.1" height="7" fill="url(#gb)"/>
<rect x="76" y="17" width="34.6" height="4.5" fill="url(#gp)"/>
<rect x="81" y="21.5" width="24.8" height="7" fill="url(#gm)"/>
<rect x="125.5" y="1" width="5.3" height="19" fill="url(#gb)"/><use href="#tstand" x="124.5" y="17"/>
<rect x="135" y="1" width="14" height="16" fill="url(#gb)"/><use href="#stand" x="133.5" y="17"/>
<rect x="153.6" y="1" width="13.4" height="16" fill="url(#gb)"/><use href="#stand" x="151.8" y="17"/>
<rect x="171.8" y="1" width="4.8" height="19" fill="url(#gb)"/><use href="#tstand" x="170.5" y="17"/>
<rect x="181" y="1" width="5" height="19" fill="url(#gb)"/><use href="#tstand" x="179.8" y="17"/>
<rect x="189" y="1" width="14" height="16" fill="url(#gb)"/>
<rect x="191.5" y="17" width="9" height="10" fill="url(#gm)"/><rect x="190" y="26.5" width="12" height="2" fill="#555"/>
</svg>
<div class="t" style="left:731.5px;top:778.1px;font-size:8.7px;letter-spacing:-0.1px"><span style="color:#222;">Attach the detector plane of </span><span style="color:#1a1a1a;font-weight:bold;">D/teX Ultra 250</span><span style="color:#222;"> to </span><span style="color:#1c8a28;">300</span><span style="color:#222;">&nbsp;&nbsp;</span><span style="color:#1c8a28;">mm</span><span style="color:#222;">.</span></div>
<div class="t" style="left:731.5px;top:789.1px;font-size:8.7px;letter-spacing:-0.1px"><span style="color:#222;">(Adjust the mark of the </span><span style="color:#1a1a1a;font-weight:bold;">detector adaptor</span><span style="color:#222;"> to </span><span style="color:#1c8a28;font-weight:bold;">351.5</span><span style="color:#222;">&nbsp;&nbsp;</span><span style="color:#1c8a28;">mm</span><span style="color:#222;">)</span></div>
<svg style="left:1036px;top:189px" width="56" height="48" viewBox="0 0 56 48">
<ellipse cx="27.5" cy="33" rx="24" ry="13" fill="#d2d2d2" stroke="#9a9a9a" stroke-width=".5"/>
<ellipse cx="27.5" cy="31" rx="24" ry="13" fill="#e9e9e9" stroke="#9a9a9a" stroke-width=".5"/>
<ellipse cx="27.5" cy="30" rx="4.5" ry="2.5" fill="#fff" stroke="#9a9a9a" stroke-width=".5"/>
<path d="M44 14l6-3v14l-6 3z" fill="#d2d2d2" stroke="#9a9a9a" stroke-width=".5"/>
<path d="M26 5l5-3 19 9-6 3z" fill="#f3f3f3" stroke="#9a9a9a" stroke-width=".5"/>
<path d="M26 5v6l18 9v-6z" fill="#e9e9e9" stroke="#9a9a9a" stroke-width=".5"/>
<circle cx="14" cy="28" r=".7" fill="#9a9a9a"/><circle cx="41" cy="30" r=".7" fill="#9a9a9a"/><circle cx="22" cy="22" r=".7" fill="#9a9a9a"/><circle cx="34" cy="38" r=".7" fill="#9a9a9a"/>
</svg>
<svg style="left:1036px;top:291px" width="56" height="34" viewBox="0 0 56 34">
<path d="M4 22l16-8 0-8 6-3 26 13-4 2v6l-20 10z" fill="#e9e9e9" stroke="#9a9a9a" stroke-width=".5"/>
<path d="M4 22l16 8 12-6M20 14l12 6v4M26 3v6l26 13" fill="none" stroke="#9a9a9a" stroke-width=".5"/>
<path d="M4 22v3l16 8v-3z" fill="#d2d2d2" stroke="#9a9a9a" stroke-width=".5"/>
<circle cx="16" cy="24" r=".7" fill="#777"/><circle cx="28" cy="14" r=".7" fill="#777"/>
</svg>
<svg style="left:1037px;top:376px" width="54" height="64" viewBox="0 0 54 64"><polygon points="28.7,27.9 43.5,30.9 50.4,34.9 50.4,41.3 38.6,46.2 28.7,51.4 20.8,51.4 20.8,46.2" fill="#e0e0e0" stroke="#8a8a8a" stroke-width=".4"/><polygon points="38.6,46.2 50.4,41.3 50.4,43.6 38.6,48.3" fill="#cfcfcf" stroke="#8a8a8a" stroke-width=".4"/><polygon points="10.4,25.3 18.8,27.4 18.8,50.6 10.4,46.2" fill="#e6e6e6" stroke="#8a8a8a" stroke-width=".4"/><polygon points="18.8,27.4 29.5,22.2 29.5,44.8 18.8,50.6" fill="#d2d2d2" stroke="#8a8a8a" stroke-width=".4"/><polygon points="3.4,16.3 18.8,23.9 18.8,27.4 3.4,19.8" fill="#d0d0d0" stroke="#8a8a8a" stroke-width=".4"/><polygon points="18.8,23.9 40.3,12.3 40.3,15.6 18.8,27.4" fill="#c4c4c4" stroke="#8a8a8a" stroke-width=".4"/><polygon points="3.4,16.3 25.2,4.8 40.3,12.3 18.8,23.9" fill="#eeeeee" stroke="#8a8a8a" stroke-width=".4"/><polygon points="23.5,2.4 26.4,1.0 40.9,9.0 40.9,16.3 38.2,17.3 38.2,10.5" fill="#dadada" stroke="#8a8a8a" stroke-width=".4"/><polygon points="3.1,14.5 6.6,12.8 6.6,18.4 3.4,20.1" fill="#e4e4e4" stroke="#8a8a8a" stroke-width=".4"/><polygon points="15.3,16.3 20.5,13.8 24.0,15.6 18.8,18.0" fill="#3c3c88" stroke="#8a8a8a" stroke-width=".4"/><polygon points="12.5,54.0 18.8,51.1 19.1,58.7 14.9,61.2 12.5,59.4" fill="#cdcdcd" stroke="#8a8a8a" stroke-width=".4"/><rect x="22.6" y="30.5" width="3.5" height="4" fill="#555"/><rect x="22.6" y="38.4" width="3.5" height="4" fill="#555"/></svg>
<svg style="left:1038px;top:481px" width="52" height="58" viewBox="0 0 52 58">
<path d="M2 14l22-12 24 10-22 12z" fill="#f1f1f1" stroke="#9a9a9a" stroke-width=".6"/>
<path d="M2 14v32l24 11V24z" fill="#e9e9e9" stroke="#9a9a9a" stroke-width=".6"/>
<path d="M26 24v33l22-12V12z" fill="#d2d2d2" stroke="#9a9a9a" stroke-width=".6"/>
<path d="M31 29l13-7v20l-13 7z" fill="#fff" stroke="#888" stroke-width=".6"/>
<path d="M33 31v15M36 29v15M39 28v15M42 26v15" stroke="#999" stroke-width="1"/>
<path d="M8 46l7 3v-3l-7-3z" fill="#fff" stroke="#777" stroke-width=".5"/>
<circle cx="4" cy="18" r=".8" fill="#666"/><circle cx="24" cy="28" r=".8" fill="#666"/><circle cx="4" cy="42" r=".8" fill="#666"/><circle cx="24" cy="53" r=".8" fill="#666"/>
</svg>
<svg style="left:1038px;top:580px" width="52" height="82" viewBox="0 0 52 82"><polygon points="2.4,19.6 35.2,1.6 45.4,6.7 8.7,23.8" fill="#d8ccaa" stroke="#777" stroke-width=".3"/><polygon points="2.4,19.6 8.7,23.8 8.7,43.9 2.4,41.4" fill="#cfc3a0" stroke="#777" stroke-width=".3"/><polygon points="8.7,23.8 45.4,6.7 45.4,23.4 8.7,43.9" fill="#c6c6c6" stroke="#777" stroke-width=".3"/><polygon points="2.4,41.4 8.7,43.9 45.4,23.4 45.4,47.1 32.7,52.8 32.7,71.7 19.5,79.3 2.4,69.8" fill="#0b0bd0" stroke="#777" stroke-width=".3"/><polygon points="8.7,54.7 20.4,49.0 32.7,55.2 20.4,61.3" fill="#2424ee" stroke="#777" stroke-width=".3"/><polygon points="20.4,61.3 32.7,55.2 32.7,71.7 19.5,79.3" fill="#0000a6" stroke="#777" stroke-width=".3"/><polygon points="30.8,52.8 46.0,45.8 49.2,48.4 49.2,51.8 33.3,59.4" fill="#e6e6e6" stroke="#777" stroke-width=".3"/><rect x="18.5" y="17.3" width="9.5" height="9.8" fill="#f4f4f4" stroke="#666" stroke-width=".5"/><circle cx="24.6" cy="33.8" r="4.3" fill="none" stroke="#888" stroke-width=".8"/><circle cx="32.7" cy="45.2" r=".8" fill="#eee"/></svg>
<svg style="left:1038px;top:704px" width="52" height="50" viewBox="0 0 52 50"><polygon points="1.8,14.9 5.6,12.7 5.6,36.2 1.8,33.5" fill="#d4d4d4" stroke="#333" stroke-width=".3"/><polygon points="5.6,12.7 27.6,1.7 29.1,4.0 6.8,14.6" fill="#e8e8e8" stroke="#333" stroke-width=".3"/><polygon points="5.6,17.2 27.6,5.8 48.8,19.7 32.2,29.1" fill="#1c1ce4" stroke="#333" stroke-width=".3"/><polygon points="5.6,17.2 32.2,29.1 32.2,48.7 5.6,35.4" fill="#0c0cc8" stroke="#333" stroke-width=".3"/><polygon points="32.2,29.1 48.8,19.7 48.8,37.7 32.2,48.7" fill="#0000b4" stroke="#333" stroke-width=".3"/><polygon points="10.9,26.7 16.2,29.1 16.2,34.3 10.9,32.0" fill="#e0e0e0"/><path d="M35.6 45.2L46.9 22.5" stroke="#555" stroke-width=".7"/></svg>
<div class="a" style="left:703px;top:813px;width:10.5px;height:10.5px;background:#fff;border:1px solid #707070"></div>
<div class="t" style="left:717px;top:814.2px;color:#262626;font-size:8.9px">Hide figures</div>
<div class="a" style="left:1021px;top:809px;width:73px;height:19px;border:1px solid #a9d1f3;background:#f4f4f4"></div>
<div class="a" style="left:1022.5px;top:810.5px;width:55.5px;height:15.5px;background:linear-gradient(#efefef,#e3e3e3);border:1px solid #a2a2a2"></div>
<div class="t c" style="left:1050px;top:814.3px;color:#262626;font-size:8.9px">OK</div>
<div class="a" style="left:1079px;top:810.5px;width:13.5px;height:15.5px;background:linear-gradient(#efefef,#e3e3e3);border:1px solid #a2a2a2"></div>
<svg style="left:1082.5px;top:815.5px" width="7" height="5" viewBox="0 0 7 5"><path d="M.5 .8L3.5 3.8 6.5 .8" stroke="#444" stroke-width=".9" fill="none"/></svg>
<div class="a" style="left:1097.5px;top:809.5px;width:54.5px;height:17.5px;background:linear-gradient(#efefef,#e3e3e3);border:1px solid #adadad"></div>
<div class="t c" style="left:1124.5px;top:814.2px;color:#262626;font-size:8.9px">Stop</div>
<svg style="left:1151px;top:828px" width="7" height="7" viewBox="0 0 7 7"><g fill="#aaa"><rect x="5" y="0" width="1" height="1"/><rect x="3" y="2" width="1" height="1"/><rect x="5" y="2" width="1" height="1"/><rect x="1" y="4" width="1" height="1"/><rect x="3" y="4" width="1" height="1"/><rect x="5" y="4" width="1" height="1"/></g></svg>
<div class="a" style="left:425px;top:669px;width:246px;height:201px;background:#fbfbfb;border:1px solid #cfcfcf;box-shadow:2px 3px 8px rgba(0,0,0,.22)"></div>
<div class="t" style="left:432px;top:675px;color:#777;font-size:8.7px">Hardware Control</div>
<div class="a" style="left:426px;top:691px;width:244px;height:1px;background:#e2e2e2"></div>
<div class="a" style="left:435px;top:701px;width:226px;height:44px;background:#fff;border:1px solid #a9a9a9"></div>
<div class="t" style="left:438.5px;top:706px;color:#333;font-size:8.7px">Optics Alignment (BB) running.</div>
<div class="a" style="left:435px;top:765px;width:226px;height:77px;background:#fff;border:1px solid #a9a9a9"></div>
<div class="t" style="left:438.5px;top:769.5px;color:#333;font-size:8.7px">Running Smart message...</div>
<div class="a" style="left:519px;top:844px;width:58px;height:16px;background:#efefef;border:1px solid #d0d0d0"></div>
<div class="t c" style="left:548px;top:848.5px;color:#999;font-size:8.7px">Stop</div>
<div class="a" style="left:1535px;top:137px;width:29px;height:16px;background:#efefef;border:1px solid #c8c8c8"></div>
<svg style="left:1543.6px;top:138.6px" width="12" height="12" viewBox="0 0 12 12"><path d="M6.00 0.30 L4.70 2.86 L1.97 1.97 L2.86 4.70 L0.30 6.00 L2.86 7.30 L1.97 10.03 L4.70 9.14 L6.00 11.70 L7.30 9.14 L10.03 10.03 L9.14 7.30 L11.70 6.00 L9.14 4.70 L10.03 1.97 L7.30 2.86z" fill="#404040"/><circle cx="6" cy="6" r="3.6" fill="#404040"/></svg>
<div class="a" style="left:1568px;top:137px;width:29px;height:16px;background:#efefef;border:1px solid #c8c8c8"></div>
<svg style="left:1575px;top:138px" width="14" height="13" viewBox="0 0 14 13"><path d="M5 4.6A4.3 4.3 0 1 1 9.6 11.1" stroke="#404040" stroke-width="2.3" fill="none"/><path d="M.9 6.8L7.4 4.1 5.6 10.9z" fill="#404040"/></svg>
<div class="a" style="left:1535px;top:155px;width:293px;height:815px;background:#fff;border:1px solid #dadada"></div>
<div class="a" style="left:1536px;top:156px;width:291px;height:16px;background:#fff;border-bottom:1px solid #e6e6e6"></div>
<div class="a" style="left:1693px;top:156px;width:1px;height:16px;background:#e6e6e6"></div>
<div class="a" style="left:1815px;top:156px;width:1px;height:16px;background:#e6e6e6"></div>
<div class="t" style="left:1539px;top:160px;color:#333">Name</div>
<div class="t" style="left:1697.5px;top:160px;color:#333">Status</div>
<div class="a" style="left:1815px;top:172px;width:12px;height:797px;background:#f0f0f0"></div>
<div class="a" style="left:1815px;top:186px;width:12px;height:752px;background:#c2c2c2"></div>
<svg style="left:1818px;top:176px" width="7" height="5" viewBox="0 0 7 5"><path d="M.5 4L3.5 1 6.5 4" stroke="#555" stroke-width="1" fill="none"/></svg>
<svg style="left:1818px;top:959px" width="7" height="5" viewBox="0 0 7 5"><path d="M.5 1L3.5 4 6.5 1" stroke="#666" stroke-width="1" fill="none"/></svg>
<div class="a" style="left:1536px;top:172px;width:279px;height:797px;overflow:hidden">
<div class="a" style="left:11px;top:0px;width:146px;height:15px;background:#f0f0f0;border-left:1px solid #e3e3e3;border-bottom:1px solid #e3e3e3"></div>
<div class="a" style="left:157px;top:0px;width:122px;height:15px;background:#b0d4ef;border-left:1px solid #e3e3e3;border-bottom:1px solid #e3e3e3"></div>
<svg style="left:5px;top:5.5px" width="4" height="4" viewBox="0 0 4 4"><path d="M4 0V4H0z" fill="#555"/></svg>
<div class="t" style="left:25px;top:3.6px;color:#1e1e1e;width:131px;overflow:hidden">Axis</div>
<div class="a" style="left:24px;top:15px;width:133px;height:14px;background:#fff;border-left:1px solid #e3e3e3;border-bottom:1px solid #e3e3e3"></div>
<div class="a" style="left:157px;top:15px;width:122px;height:14px;background:#fff;border-left:1px solid #e3e3e3;border-bottom:1px solid #e3e3e3"></div>
<svg style="left:17.5px;top:20.5px" width="4" height="4" viewBox="0 0 4 4"><path d="M4 0V4H0z" fill="#555"/></svg>
<svg style="left:24.5px;top:15.5px" width="13" height="13" viewBox="0 0 12 13"><path d="M3.5 4H7.2A3.9 3.9 0 0 1 7.2 11.8L6.4 12.8" stroke="#3a3a3a" stroke-width="2.4" fill="none"/><path d="M-.2 4L4.4 .2V7.8z" fill="#3a3a3a"/></svg>
<div class="t" style="left:37.5px;top:18.6px;color:#1e1e1e;width:118.5px;overflow:hidden">θs</div>
<div class="t" style="left:161.5px;top:18.6px;color:#1e1e1e">0.0000 °</div>
<div class="a" style="left:36px;top:29px;width:121px;height:15px;background:#fff;border-left:1px solid #e3e3e3;border-bottom:1px solid #e3e3e3"></div>
<div class="a" style="left:157px;top:29px;width:122px;height:15px;background:#fff;border-left:1px solid #e3e3e3;border-bottom:1px solid #e3e3e3"></div>
<div class="t" style="left:50px;top:32.6px;color:#1e1e1e;width:106px;overflow:hidden">Offset</div>
<div class="t" style="left:161.5px;top:32.6px;color:#1e1e1e">0.0000 °</div>
<div class="a" style="left:24px;top:44px;width:133px;height:14px;background:#fff;border-left:1px solid #e3e3e3;border-bottom:1px solid #e3e3e3"></div>
<div class="a" style="left:157px;top:44px;width:122px;height:14px;background:#fff;border-left:1px solid #e3e3e3;border-bottom:1px solid #e3e3e3"></div>
<svg style="left:17.5px;top:49.5px" width="4" height="4" viewBox="0 0 4 4"><path d="M4 0V4H0z" fill="#555"/></svg>
<svg style="left:24.5px;top:44.5px" width="13" height="13" viewBox="0 0 12 13"><path d="M3.5 4H7.2A3.9 3.9 0 0 1 7.2 11.8L6.4 12.8" stroke="#3a3a3a" stroke-width="2.4" fill="none"/><path d="M-.2 4L4.4 .2V7.8z" fill="#3a3a3a"/></svg>
<div class="t" style="left:37.5px;top:47.6px;color:#1e1e1e;width:118.5px;overflow:hidden">θd</div>
<div class="t" style="left:161.5px;top:47.6px;color:#1e1e1e">0.0000 °</div>
<div class="a" style="left:36px;top:58px;width:121px;height:15px;background:#fff;border-left:1px solid #e3e3e3;border-bottom:1px solid #e3e3e3"></div>
<div class="a" style="left:157px;top:58px;width:122px;height:15px;background:#fff;border-left:1px solid #e3e3e3;border-bottom:1px solid #e3e3e3"></div>
<div class="t" style="left:50px;top:61.6px;color:#1e1e1e;width:106px;overflow:hidden">Offset</div>
<div class="t" style="left:161.5px;top:61.6px;color:#1e1e1e">0.0000 °</div>
<div class="a" style="left:24px;top:73px;width:133px;height:14px;background:#fff;border-left:1px solid #e3e3e3;border-bottom:1px solid #e3e3e3"></div>
<div class="a" style="left:157px;top:73px;width:122px;height:14px;background:#fff;border-left:1px solid #e3e3e3;border-bottom:1px solid #e3e3e3"></div>
<svg style="left:17.5px;top:78.5px" width="4" height="4" viewBox="0 0 4 4"><path d="M4 0V4H0z" fill="#555"/></svg>
<svg style="left:24.5px;top:73.5px" width="13" height="13" viewBox="0 0 12 13"><path d="M3.5 4H7.2A3.9 3.9 0 0 1 7.2 11.8L6.4 12.8" stroke="#3a3a3a" stroke-width="2.4" fill="none"/><path d="M-.2 4L4.4 .2V7.8z" fill="#3a3a3a"/></svg>
<div class="t" style="left:37.5px;top:76.6px;color:#1e1e1e;width:118.5px;overflow:hidden">2θ</div>
<div class="t" style="left:161.5px;top:76.6px;color:#1e1e1e">0.0000 °</div>
<div class="a" style="left:36px;top:87px;width:121px;height:15px;background:#fff;border-left:1px solid #e3e3e3;border-bottom:1px solid #e3e3e3"></div>
<div class="a" style="left:157px;top:87px;width:122px;height:15px;background:#fff;border-left:1px solid #e3e3e3;border-bottom:1px solid #e3e3e3"></div>
<div class="t" style="left:50px;top:90.6px;color:#1e1e1e;width:106px;overflow:hidden">Offset</div>
<div class="t" style="left:161.5px;top:90.6px;color:#1e1e1e">0.0000 °</div>
<div class="a" style="left:24px;top:102px;width:133px;height:14px;background:#fff;border-left:1px solid #e3e3e3;border-bottom:1px solid #e3e3e3"></div>
<div class="a" style="left:157px;top:102px;width:122px;height:14px;background:#fff;border-left:1px solid #e3e3e3;border-bottom:1px solid #e3e3e3"></div>
<svg style="left:17.5px;top:107.5px" width="4" height="4" viewBox="0 0 4 4"><path d="M4 0V4H0z" fill="#555"/></svg>
<svg style="left:24.5px;top:102.5px" width="13" height="13" viewBox="0 0 12 13"><path d="M3.5 4H7.2A3.9 3.9 0 0 1 7.2 11.8L6.4 12.8" stroke="#3a3a3a" stroke-width="2.4" fill="none"/><path d="M-.2 4L4.4 .2V7.8z" fill="#3a3a3a"/></svg>
<div class="t" style="left:37.5px;top:105.6px;color:#1e1e1e;width:118.5px;overflow:hidden">ω</div>
<div class="t" style="left:161.5px;top:105.6px;color:#1e1e1e">0.0000 °</div>
<div class="a" style="left:36px;top:116px;width:121px;height:15px;background:#fff;border-left:1px solid #e3e3e3;border-bottom:1px solid #e3e3e3"></div>
<div class="a" style="left:157px;top:116px;width:122px;height:15px;background:#fff;border-left:1px solid #e3e3e3;border-bottom:1px solid #e3e3e3"></div>
<div class="t" style="left:50px;top:119.6px;color:#1e1e1e;width:106px;overflow:hidden">Offset</div>
<div class="t" style="left:161.5px;top:119.6px;color:#1e1e1e">0.0000 °</div>
<div class="a" style="left:24px;top:131px;width:133px;height:15px;background:#fff;border-left:1px solid #e3e3e3;border-bottom:1px solid #e3e3e3"></div>
<div class="a" style="left:157px;top:131px;width:122px;height:15px;background:#fff;border-left:1px solid #e3e3e3;border-bottom:1px solid #e3e3e3"></div>
<svg style="left:24.5px;top:131.5px" width="13" height="13" viewBox="0 0 12 13"><path d="M3.5 4H7.2A3.9 3.9 0 0 1 7.2 11.8L6.4 12.8" stroke="#3a3a3a" stroke-width="2.4" fill="none"/><path d="M-.2 4L4.4 .2V7.8z" fill="#3a3a3a"/></svg>
<div class="t" style="left:37.5px;top:134.6px;color:#1e1e1e;width:118.5px;overflow:hidden">θ/2θ</div>
<div class="t" style="left:161.5px;top:134.6px;color:#1e1e1e">0.0000 °</div>
<div class="a" style="left:24px;top:146px;width:133px;height:14px;background:#fff;border-left:1px solid #e3e3e3;border-bottom:1px solid #e3e3e3"></div>
<div class="a" style="left:157px;top:146px;width:122px;height:14px;background:#fff;border-left:1px solid #e3e3e3;border-bottom:1px solid #e3e3e3"></div>
<svg style="left:24.5px;top:146.5px" width="13" height="13" viewBox="0 0 12 13"><path d="M3.5 4H7.2A3.9 3.9 0 0 1 7.2 11.8L6.4 12.8" stroke="#3a3a3a" stroke-width="2.4" fill="none"/><path d="M-.2 4L4.4 .2V7.8z" fill="#3a3a3a"/></svg>
<div class="t" style="left:37.5px;top:149.6px;color:#1e1e1e;width:118.5px;overflow:hidden">2θ/ω</div>
<div class="t" style="left:161.5px;top:149.6px;color:#1e1e1e">0.0000 °</div>
<div class="a" style="left:24px;top:160px;width:133px;height:15px;background:#fff;border-left:1px solid #e3e3e3;border-bottom:1px solid #e3e3e3"></div>
<div class="a" style="left:157px;top:160px;width:122px;height:15px;background:#fff;border-left:1px solid #e3e3e3;border-bottom:1px solid #e3e3e3"></div>
<svg style="left:24.5px;top:160.5px" width="13" height="13" viewBox="0 0 12 13"><path d="M3.5 4H7.2A3.9 3.9 0 0 1 7.2 11.8L6.4 12.8" stroke="#3a3a3a" stroke-width="2.4" fill="none"/><path d="M-.2 4L4.4 .2V7.8z" fill="#3a3a3a"/></svg>
<div class="t" style="left:37.5px;top:163.6px;color:#1e1e1e;width:118.5px;overflow:hidden">ω/2θ</div>
<div class="t" style="left:161.5px;top:163.6px;color:#1e1e1e">0.0000 °</div>
<div class="a" style="left:24px;top:175px;width:133px;height:14px;background:#fff;border-left:1px solid #e3e3e3;border-bottom:1px solid #e3e3e3"></div>
<div class="a" style="left:157px;top:175px;width:122px;height:14px;background:#fff;border-left:1px solid #e3e3e3;border-bottom:1px solid #e3e3e3"></div>
<svg style="left:24.5px;top:175.5px" width="13" height="13" viewBox="0 0 12 13"><path d="M3.5 4H7.2A3.9 3.9 0 0 1 7.2 11.8L6.4 12.8" stroke="#3a3a3a" stroke-width="2.4" fill="none"/><path d="M-.2 4L4.4 .2V7.8z" fill="#3a3a3a"/></svg>
<div class="t" style="left:37.5px;top:178.6px;color:#1e1e1e;width:118.5px;overflow:hidden">Z</div>
<div class="t" style="left:161.5px;top:178.6px;color:#1e1e1e">-0.41472 mm</div>
<div class="a" style="left:24px;top:189px;width:133px;height:15px;background:#fff;border-left:1px solid #e3e3e3;border-bottom:1px solid #e3e3e3"></div>
<div class="a" style="left:157px;top:189px;width:122px;height:15px;background:#fff;border-left:1px solid #e3e3e3;border-bottom:1px solid #e3e3e3"></div>
<svg style="left:24.5px;top:189.5px" width="13" height="13" viewBox="0 0 12 13"><path d="M3.5 4H7.2A3.9 3.9 0 0 1 7.2 11.8L6.4 12.8" stroke="#3a3a3a" stroke-width="2.4" fill="none"/><path d="M-.2 4L4.4 .2V7.8z" fill="#3a3a3a"/></svg>
<div class="t" style="left:37.5px;top:192.6px;color:#1e1e1e;width:118.5px;overflow:hidden">Ts</div>
<div class="t" style="left:161.5px;top:192.6px;color:#1e1e1e">0.0000000 mm</div>
<div class="a" style="left:24px;top:204px;width:133px;height:14px;background:#fff;border-left:1px solid #e3e3e3;border-bottom:1px solid #e3e3e3"></div>
<div class="a" style="left:157px;top:204px;width:122px;height:14px;background:#fff;border-left:1px solid #e3e3e3;border-bottom:1px solid #e3e3e3"></div>
<svg style="left:24.5px;top:204.5px" width="13" height="13" viewBox="0 0 12 13"><path d="M3.5 4H7.2A3.9 3.9 0 0 1 7.2 11.8L6.4 12.8" stroke="#3a3a3a" stroke-width="2.4" fill="none"/><path d="M-.2 4L4.4 .2V7.8z" fill="#3a3a3a"/></svg>
<div class="t" style="left:37.5px;top:207.6px;color:#1e1e1e;width:118.5px;overflow:hidden">M</div>
<div class="t" style="left:161.5px;top:207.6px;color:#1e1e1e">0 pulse</div>
<div class="a" style="left:24px;top:218px;width:133px;height:15px;background:#fff;border-left:1px solid #e3e3e3;border-bottom:1px solid #e3e3e3"></div>
<div class="a" style="left:157px;top:218px;width:122px;height:15px;background:#fff;border-left:1px solid #e3e3e3;border-bottom:1px solid #e3e3e3"></div>
<svg style="left:24.5px;top:218.5px" width="13" height="13" viewBox="0 0 12 13"><path d="M.5 6.5h11" stroke="#3a3a3a" stroke-width=".8"/><circle cx="1.3" cy="6.5" r=".9" fill="#3a3a3a"/><path d="M4 6.5h3" stroke="#3a3a3a" stroke-width="1.3"/><path d="M5 1.5h3L6.5 3.5zM5 11.5h3L6.5 9.5z" fill="#3a3a3a"/></svg>
<div class="t" style="left:37.5px;top:221.6px;color:#1e1e1e;width:118.5px;overflow:hidden">Selection slit</div>
<div class="t" style="left:161.5px;top:221.6px;color:#1e1e1e">BB</div>
<div class="a" style="left:24px;top:233px;width:133px;height:15px;background:#fff;border-left:1px solid #e3e3e3;border-bottom:1px solid #e3e3e3"></div>
<div class="a" style="left:157px;top:233px;width:122px;height:15px;background:#fff;border-left:1px solid #e3e3e3;border-bottom:1px solid #e3e3e3"></div>
<svg style="left:24.5px;top:233.5px" width="13" height="13" viewBox="0 0 12 13"><path d="M.5 6.5h11" stroke="#3a3a3a" stroke-width=".8"/><circle cx="1.3" cy="6.5" r=".9" fill="#3a3a3a"/><path d="M4 6.5h3" stroke="#3a3a3a" stroke-width="1.3"/><path d="M5 1.5h3L6.5 3.5zM5 11.5h3L6.5 9.5z" fill="#3a3a3a"/></svg>
<div class="t" style="left:37.5px;top:236.6px;color:#1e1e1e;width:118.5px;overflow:hidden">Incident Soller slit</div>
<div class="t" style="left:161.5px;top:236.6px;color:#1e1e1e">Soller slit 2.5°</div>
<div class="a" style="left:24px;top:248px;width:133px;height:14px;background:#fff;border-left:1px solid #e3e3e3;border-bottom:1px solid #e3e3e3"></div>
<div class="a" style="left:157px;top:248px;width:122px;height:14px;background:#fff;border-left:1px solid #e3e3e3;border-bottom:1px solid #e3e3e3"></div>
<svg style="left:24.5px;top:248.5px" width="13" height="13" viewBox="0 0 12 13"><path d="M3.5 4H7.2A3.9 3.9 0 0 1 7.2 11.8L6.4 12.8" stroke="#3a3a3a" stroke-width="2.4" fill="none"/><path d="M-.2 4L4.4 .2V7.8z" fill="#3a3a3a"/></svg>
<div class="t" style="left:37.5px;top:251.6px;color:#1e1e1e;width:118.5px;overflow:hidden">Zs</div>
<div class="t" style="left:161.5px;top:251.6px;color:#1e1e1e">0.0000000 mm</div>
<div class="a" style="left:24px;top:262px;width:133px;height:15px;background:#fff;border-left:1px solid #e3e3e3;border-bottom:1px solid #e3e3e3"></div>
<div class="a" style="left:157px;top:262px;width:122px;height:15px;background:#fff;border-left:1px solid #e3e3e3;border-bottom:1px solid #e3e3e3"></div>
<svg style="left:24.5px;top:262.5px" width="13" height="13" viewBox="0 0 12 13"><path d="M.5 6.5h11" stroke="#3a3a3a" stroke-width=".8"/><circle cx="1.3" cy="6.5" r=".9" fill="#3a3a3a"/><path d="M4 6.5h3" stroke="#3a3a3a" stroke-width="1.3"/><path d="M5 1.5h3L6.5 3.5zM5 11.5h3L6.5 9.5z" fill="#3a3a3a"/></svg>
<div class="t" style="left:37.5px;top:265.6px;color:#1e1e1e;width:118.5px;overflow:hidden">IS</div>
<div class="t" style="left:161.5px;top:265.6px;color:#1e1e1e">1/2°</div>
<div class="a" style="left:24px;top:277px;width:133px;height:14px;background:#fff;border-left:1px solid #e3e3e3;border-bottom:1px solid #e3e3e3"></div>
<div class="a" style="left:157px;top:277px;width:122px;height:14px;background:#fff;border-left:1px solid #e3e3e3;border-bottom:1px solid #e3e3e3"></div>
<svg style="left:24.5px;top:277.5px" width="13" height="13" viewBox="0 0 12 13"><path d="M.5 6.5h11" stroke="#3a3a3a" stroke-width=".8"/><circle cx="1.3" cy="6.5" r=".9" fill="#3a3a3a"/><path d="M4 6.5h3" stroke="#3a3a3a" stroke-width="1.3"/><path d="M5 1.5h3L6.5 3.5zM5 11.5h3L6.5 9.5z" fill="#3a3a3a"/></svg>
<div class="t" style="left:37.5px;top:280.6px;color:#1e1e1e;width:118.5px;overflow:hidden">Length-limiting slit</div>
<div class="t" style="left:161.5px;top:280.6px;color:#1e1e1e">10 mm</div>
<div class="a" style="left:24px;top:291px;width:133px;height:15px;background:#fff;border-left:1px solid #e3e3e3;border-bottom:1px solid #e3e3e3"></div>
<div class="a" style="left:157px;top:291px;width:122px;height:15px;background:#fff;border-left:1px solid #e3e3e3;border-bottom:1px solid #e3e3e3"></div>
<svg style="left:24.5px;top:291.5px" width="13" height="13" viewBox="0 0 12 13"><path d="M.5 6.5h11" stroke="#3a3a3a" stroke-width=".8"/><circle cx="1.3" cy="6.5" r=".9" fill="#3a3a3a"/><path d="M4 6.5h3" stroke="#3a3a3a" stroke-width="1.3"/><path d="M5 1.5h3L6.5 3.5zM5 11.5h3L6.5 9.5z" fill="#3a3a3a"/></svg>
<div class="t" style="left:37.5px;top:294.6px;color:#1e1e1e;width:118.5px;overflow:hidden">RS1</div>
<div class="t" style="left:161.5px;top:294.6px;color:#1e1e1e">Open</div>
<div class="a" style="left:24px;top:306px;width:133px;height:14px;background:#fff;border-left:1px solid #e3e3e3;border-bottom:1px solid #e3e3e3"></div>
<div class="a" style="left:157px;top:306px;width:122px;height:14px;background:#fff;border-left:1px solid #e3e3e3;border-bottom:1px solid #e3e3e3"></div>
<svg style="left:24.5px;top:306.5px" width="13" height="13" viewBox="0 0 12 13"><path d="M.5 6.5h7" stroke="#3a3a3a" stroke-width=".8"/><circle cx="1.2" cy="6.5" r=".8" fill="#3a3a3a"/><path d="M10 .5v12" stroke="#3a3a3a" stroke-width="1.3"/></svg>
<div class="t" style="left:37.5px;top:309.6px;color:#1e1e1e;width:118.5px;overflow:hidden">Filter 1</div>
<div class="t" style="left:161.5px;top:309.6px;color:#1e1e1e">None</div>
<div class="a" style="left:24px;top:320px;width:133px;height:15px;background:#fff;border-left:1px solid #e3e3e3;border-bottom:1px solid #e3e3e3"></div>
<div class="a" style="left:157px;top:320px;width:122px;height:15px;background:#fff;border-left:1px solid #e3e3e3;border-bottom:1px solid #e3e3e3"></div>
<svg style="left:24.5px;top:320.5px" width="13" height="13" viewBox="0 0 12 13"><path d="M.5 6.5h11" stroke="#3a3a3a" stroke-width=".8"/><circle cx="1.3" cy="6.5" r=".9" fill="#3a3a3a"/><path d="M4 6.5h3" stroke="#3a3a3a" stroke-width="1.3"/><path d="M5 1.5h3L6.5 3.5zM5 11.5h3L6.5 9.5z" fill="#3a3a3a"/></svg>
<div class="t" style="left:37.5px;top:323.6px;color:#1e1e1e;width:118.5px;overflow:hidden">PSA</div>
<div class="t" style="left:161.5px;top:323.6px;color:#1e1e1e">PSA open</div>
<div class="a" style="left:24px;top:335px;width:133px;height:14px;background:#fff;border-left:1px solid #e3e3e3;border-bottom:1px solid #e3e3e3"></div>
<div class="a" style="left:157px;top:335px;width:122px;height:14px;background:#fff;border-left:1px solid #e3e3e3;border-bottom:1px solid #e3e3e3"></div>
<svg style="left:24.5px;top:335.5px" width="13" height="13" viewBox="0 0 12 13"><path d="M.5 6.5h11" stroke="#3a3a3a" stroke-width=".8"/><circle cx="1.3" cy="6.5" r=".9" fill="#3a3a3a"/><path d="M4 6.5h3" stroke="#3a3a3a" stroke-width="1.3"/><path d="M5 1.5h3L6.5 3.5zM5 11.5h3L6.5 9.5z" fill="#3a3a3a"/></svg>
<div class="t" style="left:37.5px;top:338.6px;color:#1e1e1e;width:118.5px;overflow:hidden">Receiving Soller slit</div>
<div class="t" style="left:161.5px;top:338.6px;color:#1e1e1e">Soller slit 2.5°</div>
<div class="a" style="left:24px;top:349px;width:133px;height:15px;background:#fff;border-left:1px solid #e3e3e3;border-bottom:1px solid #e3e3e3"></div>
<div class="a" style="left:157px;top:349px;width:122px;height:15px;background:#fff;border-left:1px solid #e3e3e3;border-bottom:1px solid #e3e3e3"></div>
<svg style="left:24.5px;top:349.5px" width="13" height="13" viewBox="0 0 12 13"><path d="M.5 6.5h11" stroke="#3a3a3a" stroke-width=".8"/><circle cx="1.3" cy="6.5" r=".9" fill="#3a3a3a"/><path d="M4 6.5h3" stroke="#3a3a3a" stroke-width="1.3"/><path d="M5 1.5h3L6.5 3.5zM5 11.5h3L6.5 9.5z" fill="#3a3a3a"/></svg>
<div class="t" style="left:37.5px;top:352.6px;color:#1e1e1e;width:118.5px;overflow:hidden">RS2</div>
<div class="t" style="left:161.5px;top:352.6px;color:#1e1e1e">Open</div>
<div class="a" style="left:11px;top:364px;width:146px;height:15px;background:#fff;border-left:1px solid #e3e3e3;border-bottom:1px solid #e3e3e3"></div>
<div class="a" style="left:157px;top:364px;width:122px;height:15px;background:#fff;border-left:1px solid #e3e3e3;border-bottom:1px solid #e3e3e3"></div>
<div class="t" style="left:25px;top:367.6px;color:#1e1e1e;width:131px;overflow:hidden">Sample</div>
<div class="a" style="left:11px;top:379px;width:146px;height:14px;background:#fff;border-left:1px solid #e3e3e3;border-bottom:1px solid #e3e3e3"></div>
<div class="a" style="left:157px;top:379px;width:122px;height:14px;background:#fff;border-left:1px solid #e3e3e3;border-bottom:1px solid #e3e3e3"></div>
<svg style="left:5px;top:384.5px" width="4" height="4" viewBox="0 0 4 4"><path d="M4 0V4H0z" fill="#555"/></svg>
<div class="t" style="left:25px;top:382.6px;color:#1e1e1e;width:131px;overflow:hidden">Optics</div>
<div class="a" style="left:24px;top:393px;width:133px;height:15px;background:#fff;border-left:1px solid #e3e3e3;border-bottom:1px solid #e3e3e3"></div>
<div class="a" style="left:157px;top:393px;width:122px;height:15px;background:#fff;border-left:1px solid #e3e3e3;border-bottom:1px solid #e3e3e3"></div>
<svg style="left:24.5px;top:393.5px" width="13" height="13" viewBox="0 0 12 13"><path d="M3.8 2.6H7A4.9 4.9 0 0 1 7 12.4L5.6 12.6V10.2L7 10A2.6 2.6 0 0 0 7 5H3.8" stroke="#3a3a3a" stroke-width=".8" fill="#fff"/><path d="M.2 3.8L3.9 .5V7.1z" stroke="#3a3a3a" stroke-width=".8" fill="#fff" stroke-linejoin="round"/></svg>
<div class="t" style="left:37.5px;top:396.6px;color:#1e1e1e;width:118.5px;overflow:hidden">Attachment base</div>
<div class="t" style="left:161.5px;top:396.6px;color:#1e1e1e">Standard attachment</div>
<div class="a" style="left:24px;top:408px;width:133px;height:14px;background:#fff;border-left:1px solid #e3e3e3;border-bottom:1px solid #e3e3e3"></div>
<div class="a" style="left:157px;top:408px;width:122px;height:14px;background:#fff;border-left:1px solid #e3e3e3;border-bottom:1px solid #e3e3e3"></div>
<svg style="left:24.5px;top:408.5px" width="13" height="13" viewBox="0 0 12 13"><path d="M3.8 2.6H7A4.9 4.9 0 0 1 7 12.4L5.6 12.6V10.2L7 10A2.6 2.6 0 0 0 7 5H3.8" stroke="#3a3a3a" stroke-width=".8" fill="#fff"/><path d="M.2 3.8L3.9 .5V7.1z" stroke="#3a3a3a" stroke-width=".8" fill="#fff" stroke-linejoin="round"/></svg>
<div class="t" style="left:37.5px;top:411.6px;color:#1e1e1e;width:118.5px;overflow:hidden">Attachment head</div>
<div class="t" style="left:161.5px;top:411.6px;color:#1e1e1e">Standard attachment head</div>
<div class="a" style="left:24px;top:422px;width:133px;height:15px;background:#fff;border-left:1px solid #e3e3e3;border-bottom:1px solid #e3e3e3"></div>
<div class="a" style="left:157px;top:422px;width:122px;height:15px;background:#fff;border-left:1px solid #e3e3e3;border-bottom:1px solid #e3e3e3"></div>
<svg style="left:24.5px;top:422.5px" width="13" height="13" viewBox="0 0 12 13"><path d="M3.8 2.6H7A4.9 4.9 0 0 1 7 12.4L5.6 12.6V10.2L7 10A2.6 2.6 0 0 0 7 5H3.8" stroke="#3a3a3a" stroke-width=".8" fill="#fff"/><path d="M.2 3.8L3.9 .5V7.1z" stroke="#3a3a3a" stroke-width=".8" fill="#fff" stroke-linejoin="round"/></svg>
<div class="t" style="left:37.5px;top:425.6px;color:#1e1e1e;width:118.5px;overflow:hidden">Attachment option</div>
<div class="t" style="left:161.5px;top:425.6px;color:#1e1e1e">None</div>
<svg style="left:268px;top:427px" width="7" height="5" viewBox="0 0 7 5"><path d="M.5 1L3.5 4 6.5 1" stroke="#444" stroke-width="1" fill="none"/></svg>
<div class="a" style="left:24px;top:437px;width:133px;height:14px;background:#fff;border-left:1px solid #e3e3e3;border-bottom:1px solid #e3e3e3"></div>
<div class="a" style="left:157px;top:437px;width:122px;height:14px;background:#fff;border-left:1px solid #e3e3e3;border-bottom:1px solid #e3e3e3"></div>
<svg style="left:24.5px;top:437.5px" width="13" height="13" viewBox="0 0 12 13"><path d="M3.8 2.6H7A4.9 4.9 0 0 1 7 12.4L5.6 12.6V10.2L7 10A2.6 2.6 0 0 0 7 5H3.8" stroke="#3a3a3a" stroke-width=".8" fill="#fff"/><path d="M.2 3.8L3.9 .5V7.1z" stroke="#3a3a3a" stroke-width=".8" fill="#fff" stroke-linejoin="round"/></svg>
<div class="t" style="left:37.5px;top:440.6px;color:#1e1e1e;width:118.5px;overflow:hidden">CBO</div>
<div class="t" style="left:161.5px;top:440.6px;color:#1e1e1e">CBO</div>
<div class="a" style="left:24px;top:451px;width:133px;height:15px;background:#fff;border-left:1px solid #e3e3e3;border-bottom:1px solid #e3e3e3"></div>
<div class="a" style="left:157px;top:451px;width:122px;height:15px;background:#fff;border-left:1px solid #e3e3e3;border-bottom:1px solid #e3e3e3"></div>
<svg style="left:24.5px;top:451.5px" width="13" height="13" viewBox="0 0 12 13"><path d="M3.8 2.6H7A4.9 4.9 0 0 1 7 12.4L5.6 12.6V10.2L7 10A2.6 2.6 0 0 0 7 5H3.8" stroke="#3a3a3a" stroke-width=".8" fill="#fff"/><path d="M.2 3.8L3.9 .5V7.1z" stroke="#3a3a3a" stroke-width=".8" fill="#fff" stroke-linejoin="round"/></svg>
<div class="t" style="left:37.5px;top:454.6px;color:#1e1e1e;width:118.5px;overflow:hidden">Optics attribute</div>
<div class="t" style="left:161.5px;top:454.6px;color:#1e1e1e">BB</div>
<div class="a" style="left:11px;top:466px;width:146px;height:14px;background:#fff;border-left:1px solid #e3e3e3;border-bottom:1px solid #e3e3e3"></div>
<div class="a" style="left:157px;top:466px;width:122px;height:14px;background:#fff;border-left:1px solid #e3e3e3;border-bottom:1px solid #e3e3e3"></div>
<svg style="left:5px;top:471.5px" width="4" height="4" viewBox="0 0 4 4"><path d="M4 0V4H0z" fill="#555"/></svg>
<div class="t" style="left:25px;top:469.6px;color:#1e1e1e;width:131px;overflow:hidden">Detector</div>
<div class="a" style="left:24px;top:480px;width:133px;height:15px;background:#fff;border-left:1px solid #e3e3e3;border-bottom:1px solid #e3e3e3"></div>
<div class="a" style="left:157px;top:480px;width:122px;height:15px;background:#fff;border-left:1px solid #e3e3e3;border-bottom:1px solid #e3e3e3"></div>
<svg style="left:24.5px;top:480.5px" width="13" height="13" viewBox="0 0 12 13"><path d="M.5 6.5h4" stroke="#3a3a3a" stroke-width=".8"/><circle cx="1.2" cy="6.5" r=".8" fill="#3a3a3a"/><path d="M7 1.5L5 5v4l2 3M7 1.5h3v10.5H7" stroke="#3a3a3a" stroke-width=".9" fill="none"/></svg>
<div class="t" style="left:37.5px;top:483.6px;color:#1e1e1e;width:118.5px;overflow:hidden">Detector</div>
<div class="t" style="left:161.5px;top:483.6px;color:#1e1e1e">XSPA-400 ER (horizontal)</div>
<div class="a" style="left:24px;top:495px;width:133px;height:15px;background:#fff;border-left:1px solid #e3e3e3;border-bottom:1px solid #e3e3e3"></div>
<div class="a" style="left:157px;top:495px;width:122px;height:15px;background:#fff;border-left:1px solid #e3e3e3;border-bottom:1px solid #e3e3e3"></div>
<svg style="left:24.5px;top:495.5px" width="13" height="13" viewBox="0 0 12 13"><path d="M.5 6.5h4" stroke="#3a3a3a" stroke-width=".8"/><circle cx="1.2" cy="6.5" r=".8" fill="#3a3a3a"/><path d="M7 1.5L5 5v4l2 3M7 1.5h3v10.5H7" stroke="#3a3a3a" stroke-width=".9" fill="none"/></svg>
<div class="t" style="left:37.5px;top:498.6px;color:#1e1e1e;width:118.5px;overflow:hidden">Energy mode</div>
<div class="t" style="left:161.5px;top:498.6px;color:#1e1e1e">Standard</div>
<div class="a" style="left:24px;top:510px;width:133px;height:14px;background:#fff;border-left:1px solid #e3e3e3;border-bottom:1px solid #e3e3e3"></div>
<div class="a" style="left:157px;top:510px;width:122px;height:14px;background:#fff;border-left:1px solid #e3e3e3;border-bottom:1px solid #e3e3e3"></div>
<svg style="left:24.5px;top:510.5px" width="13" height="13" viewBox="0 0 12 13"><path d="M.5 6.5h4" stroke="#3a3a3a" stroke-width=".8"/><circle cx="1.2" cy="6.5" r=".8" fill="#3a3a3a"/><path d="M7 1.5L5 5v4l2 3M7 1.5h3v10.5H7" stroke="#3a3a3a" stroke-width=".9" fill="none"/></svg>
<div class="t" style="left:37.5px;top:513.6px;color:#1e1e1e;width:118.5px;overflow:hidden">Count mode</div>
<div class="t" style="left:161.5px;top:513.6px;color:#1e1e1e">Differential (Kβ Reduction)</div>
<div class="a" style="left:24px;top:524px;width:133px;height:15px;background:#fff;border-left:1px solid #e3e3e3;border-bottom:1px solid #e3e3e3"></div>
<div class="a" style="left:157px;top:524px;width:122px;height:15px;background:#fff;border-left:1px solid #e3e3e3;border-bottom:1px solid #e3e3e3"></div>
<svg style="left:24.5px;top:524.5px" width="13" height="13" viewBox="0 0 12 13"><path d="M.5 6.5h4" stroke="#3a3a3a" stroke-width=".8"/><circle cx="1.2" cy="6.5" r=".8" fill="#3a3a3a"/><path d="M7 1.5L5 5v4l2 3M7 1.5h3v10.5H7" stroke="#3a3a3a" stroke-width=".9" fill="none"/></svg>
<div class="t" style="left:37.5px;top:527.6px;color:#1e1e1e;width:118.5px;overflow:hidden">Center X-position</div>
<div class="t" style="left:161.5px;top:527.6px;color:#1e1e1e">256.50 pixel</div>
<div class="a" style="left:24px;top:539px;width:133px;height:14px;background:#fff;border-left:1px solid #e3e3e3;border-bottom:1px solid #e3e3e3"></div>
<div class="a" style="left:157px;top:539px;width:122px;height:14px;background:#fff;border-left:1px solid #e3e3e3;border-bottom:1px solid #e3e3e3"></div>
<svg style="left:24.5px;top:539.5px" width="13" height="13" viewBox="0 0 12 13"><path d="M.5 6.5h4" stroke="#3a3a3a" stroke-width=".8"/><circle cx="1.2" cy="6.5" r=".8" fill="#3a3a3a"/><path d="M7 1.5L5 5v4l2 3M7 1.5h3v10.5H7" stroke="#3a3a3a" stroke-width=".9" fill="none"/></svg>
<div class="t" style="left:37.5px;top:542.6px;color:#1e1e1e;width:118.5px;overflow:hidden">Center Y-position</div>
<div class="t" style="left:161.5px;top:542.6px;color:#1e1e1e">64.50 pixel</div>
<div class="a" style="left:24px;top:553px;width:133px;height:15px;background:#fff;border-left:1px solid #e3e3e3;border-bottom:1px solid #e3e3e3"></div>
<div class="a" style="left:157px;top:553px;width:122px;height:15px;background:#fff;border-left:1px solid #e3e3e3;border-bottom:1px solid #e3e3e3"></div>
<svg style="left:24.5px;top:553.5px" width="13" height="13" viewBox="0 0 12 13"><path d="M.5 6.5h4" stroke="#3a3a3a" stroke-width=".8"/><circle cx="1.2" cy="6.5" r=".8" fill="#3a3a3a"/><path d="M7 1.5L5 5v4l2 3M7 1.5h3v10.5H7" stroke="#3a3a3a" stroke-width=".9" fill="none"/></svg>
<div class="t" style="left:37.5px;top:556.6px;color:#1e1e1e;width:118.5px;overflow:hidden">Integrated width</div>
<div class="t" style="left:161.5px;top:556.6px;color:#1e1e1e">20.100 mm</div>
<div class="a" style="left:24px;top:568px;width:133px;height:14px;background:#fff;border-left:1px solid #e3e3e3;border-bottom:1px solid #e3e3e3"></div>
<div class="a" style="left:157px;top:568px;width:122px;height:14px;background:#fff;border-left:1px solid #e3e3e3;border-bottom:1px solid #e3e3e3"></div>
<svg style="left:24.5px;top:568.5px" width="13" height="13" viewBox="0 0 12 13"><path d="M.5 6.5h4" stroke="#3a3a3a" stroke-width=".8"/><circle cx="1.2" cy="6.5" r=".8" fill="#3a3a3a"/><path d="M7 1.5L5 5v4l2 3M7 1.5h3v10.5H7" stroke="#3a3a3a" stroke-width=".9" fill="none"/></svg>
<div class="t" style="left:37.5px;top:571.6px;color:#1e1e1e;width:118.5px;overflow:hidden">Discriminator #1</div>
<div class="t" style="left:161.5px;top:571.6px;color:#1e1e1e">7.80 keV</div>
<div class="a" style="left:24px;top:582px;width:133px;height:15px;background:#fff;border-left:1px solid #e3e3e3;border-bottom:1px solid #e3e3e3"></div>
<div class="a" style="left:157px;top:582px;width:122px;height:15px;background:#fff;border-left:1px solid #e3e3e3;border-bottom:1px solid #e3e3e3"></div>
<svg style="left:24.5px;top:582.5px" width="13" height="13" viewBox="0 0 12 13"><path d="M.5 6.5h4" stroke="#3a3a3a" stroke-width=".8"/><circle cx="1.2" cy="6.5" r=".8" fill="#3a3a3a"/><path d="M7 1.5L5 5v4l2 3M7 1.5h3v10.5H7" stroke="#3a3a3a" stroke-width=".9" fill="none"/></svg>
<div class="t" style="left:37.5px;top:585.6px;color:#1e1e1e;width:118.5px;overflow:hidden">Discriminator #2</div>
<div class="t" style="left:161.5px;top:585.6px;color:#1e1e1e">8.30 keV</div>
<div class="a" style="left:11px;top:597px;width:146px;height:15px;background:#fff;border-left:1px solid #e3e3e3;border-bottom:1px solid #e3e3e3"></div>
<div class="a" style="left:157px;top:597px;width:122px;height:15px;background:#fff;border-left:1px solid #e3e3e3;border-bottom:1px solid #e3e3e3"></div>
<svg style="left:5px;top:602.5px" width="4" height="4" viewBox="0 0 4 4"><path d="M4 0V4H0z" fill="#555"/></svg>
<div class="t" style="left:25px;top:600.6px;color:#1e1e1e;width:131px;overflow:hidden">X-ray generator</div>
<div class="a" style="left:24px;top:612px;width:133px;height:14px;background:#fff;border-left:1px solid #e3e3e3;border-bottom:1px solid #e3e3e3"></div>
<div class="a" style="left:157px;top:612px;width:122px;height:14px;background:#fff;border-left:1px solid #e3e3e3;border-bottom:1px solid #e3e3e3"></div>
<svg style="left:24.5px;top:612.5px" width="13" height="13" viewBox="0 0 12 13"><path d="M1 2.5h4v2L3 6.5 1 4.5zM3 6.5v6M1.5 0v1.5M4.5 0v1.5" stroke="#3a3a3a" stroke-width=".8" fill="none"/><circle cx="6.8" cy="7.5" r=".7" fill="#3a3a3a"/><circle cx="9.5" cy="7.5" r=".7" fill="#3a3a3a"/><circle cx="8.1" cy="10.5" r=".9" fill="#3a3a3a"/></svg>
<div class="t" style="left:37.5px;top:615.6px;color:#1e1e1e;width:118.5px;overflow:hidden">Vacuum</div>
<div class="t" style="left:161.5px;top:615.6px;color:#1e1e1e">On</div>
<div class="a" style="left:24px;top:626px;width:133px;height:15px;background:#fff;border-left:1px solid #e3e3e3;border-bottom:1px solid #e3e3e3"></div>
<div class="a" style="left:157px;top:626px;width:122px;height:15px;background:#fff;border-left:1px solid #e3e3e3;border-bottom:1px solid #e3e3e3"></div>
<svg style="left:24.5px;top:626.5px" width="13" height="13" viewBox="0 0 12 13"><circle cx="6" cy="6.5" r="5.3" stroke="#3a3a3a" stroke-width=".8" fill="none"/><path d="M6 6.5L3.5 3A4 4 0 0 0 2 6.5zM6 6.5L8.5 3A4 4 0 0 1 10 6.5zM6 6.5L4 9.5a4 4 0 0 0 4 0z" fill="#3a3a3a"/></svg>
<div class="t" style="left:37.5px;top:629.6px;color:#1e1e1e;width:118.5px;overflow:hidden">X-ray</div>
<div class="t" style="left:161.5px;top:629.6px;color:#1e1e1e">On</div>
<div class="a" style="left:24px;top:641px;width:133px;height:14px;background:#fff;border-left:1px solid #e3e3e3;border-bottom:1px solid #e3e3e3"></div>
<div class="a" style="left:157px;top:641px;width:122px;height:14px;background:#fff;border-left:1px solid #e3e3e3;border-bottom:1px solid #e3e3e3"></div>
<svg style="left:24.5px;top:641.5px" width="13" height="13" viewBox="0 0 12 13"><path d="M.5 6.5h7" stroke="#3a3a3a" stroke-width=".8"/><circle cx="1.2" cy="6.5" r=".8" fill="#3a3a3a"/><path d="M10 .5v12" stroke="#3a3a3a" stroke-width="1.3"/></svg>
<div class="t" style="left:37.5px;top:644.6px;color:#1e1e1e;width:118.5px;overflow:hidden">Shutter</div>
<div class="t" style="left:161.5px;top:644.6px;color:#1e1e1e">Close</div>
<div class="a" style="left:24px;top:655px;width:133px;height:15px;background:#fff;border-left:1px solid #e3e3e3;border-bottom:1px solid #e3e3e3"></div>
<div class="a" style="left:157px;top:655px;width:122px;height:15px;background:#fff;border-left:1px solid #e3e3e3;border-bottom:1px solid #e3e3e3"></div>
<svg style="left:24.5px;top:655.5px" width="13" height="13" viewBox="0 0 12 13"><path d="M1.3 9.8A5.3 5.3 0 0 1 11.3 9.8" stroke="#3a3a3a" stroke-width=".9" fill="none"/><path d="M0 8.6l1.3 1.6 1.5-1.4M9.8 8.8l1.5 1.4 1.1-1.7" stroke="#3a3a3a" stroke-width=".8" fill="none"/><path d="M5.6 11l1.8-3" stroke="#3a3a3a" stroke-width="1"/><circle cx="5.8" cy="10.8" r="1.1" stroke="#3a3a3a" stroke-width=".7" fill="none"/><path d="M6.3 4.4v1.2" stroke="#3a3a3a" stroke-width=".6"/></svg>
<div class="t" style="left:37.5px;top:658.6px;color:#1e1e1e;width:118.5px;overflow:hidden">Tube voltage</div>
<div class="t" style="left:161.5px;top:658.6px;color:#1e1e1e">20 kV</div>
<div class="a" style="left:24px;top:670px;width:133px;height:14px;background:#fff;border-left:1px solid #e3e3e3;border-bottom:1px solid #e3e3e3"></div>
<div class="a" style="left:157px;top:670px;width:122px;height:14px;background:#fff;border-left:1px solid #e3e3e3;border-bottom:1px solid #e3e3e3"></div>
<svg style="left:24.5px;top:670.5px" width="13" height="13" viewBox="0 0 12 13"><path d="M1.3 9.8A5.3 5.3 0 0 1 11.3 9.8" stroke="#3a3a3a" stroke-width=".9" fill="none"/><path d="M0 8.6l1.3 1.6 1.5-1.4M9.8 8.8l1.5 1.4 1.1-1.7" stroke="#3a3a3a" stroke-width=".8" fill="none"/><path d="M5.6 11l1.8-3" stroke="#3a3a3a" stroke-width="1"/><circle cx="5.8" cy="10.8" r="1.1" stroke="#3a3a3a" stroke-width=".7" fill="none"/><path d="M6.3 4.4v1.2" stroke="#3a3a3a" stroke-width=".6"/></svg>
<div class="t" style="left:37.5px;top:673.6px;color:#1e1e1e;width:118.5px;overflow:hidden">Tube current</div>
<div class="t" style="left:161.5px;top:673.6px;color:#1e1e1e">10 mA</div>
<div class="a" style="left:24px;top:684px;width:133px;height:15px;background:#fff;border-left:1px solid #e3e3e3;border-bottom:1px solid #e3e3e3"></div>
<div class="a" style="left:157px;top:684px;width:122px;height:15px;background:#fff;border-left:1px solid #e3e3e3;border-bottom:1px solid #e3e3e3"></div>
<svg style="left:24.5px;top:684.5px" width="13" height="13" viewBox="0 0 12 13"><path d="M1.3 9.8A5.3 5.3 0 0 1 11.3 9.8" stroke="#3a3a3a" stroke-width=".9" fill="none"/><path d="M0 8.6l1.3 1.6 1.5-1.4M9.8 8.8l1.5 1.4 1.1-1.7" stroke="#3a3a3a" stroke-width=".8" fill="none"/><path d="M5.6 11l1.8-3" stroke="#3a3a3a" stroke-width="1"/><circle cx="5.8" cy="10.8" r="1.1" stroke="#3a3a3a" stroke-width=".7" fill="none"/><path d="M6.3 4.4v1.2" stroke="#3a3a3a" stroke-width=".6"/></svg>
<div class="t" style="left:37.5px;top:687.6px;color:#1e1e1e;width:118.5px;overflow:hidden">IG voltage</div>
<div class="t" style="left:161.5px;top:687.6px;color:#1e1e1e">87.00 mV</div>
<div class="a" style="left:24px;top:699px;width:133px;height:14px;background:#fff;border-left:1px solid #e3e3e3;border-bottom:1px solid #e3e3e3"></div>
<div class="a" style="left:157px;top:699px;width:122px;height:14px;background:#fff;border-left:1px solid #e3e3e3;border-bottom:1px solid #e3e3e3"></div>
<svg style="left:24.5px;top:699.5px" width="13" height="13" viewBox="0 0 12 13"><path d="M1.3 9.8A5.3 5.3 0 0 1 11.3 9.8" stroke="#3a3a3a" stroke-width=".9" fill="none"/><path d="M0 8.6l1.3 1.6 1.5-1.4M9.8 8.8l1.5 1.4 1.1-1.7" stroke="#3a3a3a" stroke-width=".8" fill="none"/><path d="M5.6 11l1.8-3" stroke="#3a3a3a" stroke-width="1"/><circle cx="5.8" cy="10.8" r="1.1" stroke="#3a3a3a" stroke-width=".7" fill="none"/><path d="M6.3 4.4v1.2" stroke="#3a3a3a" stroke-width=".6"/></svg>
<div class="t" style="left:37.5px;top:702.6px;color:#1e1e1e;width:118.5px;overflow:hidden">Operating time of the X-ray ON</div>
<div class="t" style="left:161.5px;top:702.6px;color:#1e1e1e">3177.07 H</div>
<div class="a" style="left:24px;top:713px;width:133px;height:15px;background:#fff;border-left:1px solid #e3e3e3;border-bottom:1px solid #e3e3e3"></div>
<div class="a" style="left:157px;top:713px;width:122px;height:15px;background:#fff;border-left:1px solid #e3e3e3;border-bottom:1px solid #e3e3e3"></div>
<svg style="left:24.5px;top:713.5px" width="13" height="13" viewBox="0 0 12 13"><path d="M1.3 9.8A5.3 5.3 0 0 1 11.3 9.8" stroke="#3a3a3a" stroke-width=".9" fill="none"/><path d="M0 8.6l1.3 1.6 1.5-1.4M9.8 8.8l1.5 1.4 1.1-1.7" stroke="#3a3a3a" stroke-width=".8" fill="none"/><path d="M5.6 11l1.8-3" stroke="#3a3a3a" stroke-width="1"/><circle cx="5.8" cy="10.8" r="1.1" stroke="#3a3a3a" stroke-width=".7" fill="none"/><path d="M6.3 4.4v1.2" stroke="#3a3a3a" stroke-width=".6"/></svg>
<div class="t" style="left:37.5px;top:716.6px;color:#1e1e1e;width:118.5px;overflow:hidden">Current bias</div>
<div class="t" style="left:161.5px;top:716.6px;color:#1e1e1e">10 V</div>
<div class="a" style="left:24px;top:728px;width:133px;height:15px;background:#fff;border-left:1px solid #e3e3e3;border-bottom:1px solid #e3e3e3"></div>
<div class="a" style="left:157px;top:728px;width:122px;height:15px;background:#fff;border-left:1px solid #e3e3e3;border-bottom:1px solid #e3e3e3"></div>
<svg style="left:24.5px;top:728.5px" width="13" height="13" viewBox="0 0 12 13"><path d="M1.3 9.8A5.3 5.3 0 0 1 11.3 9.8" stroke="#3a3a3a" stroke-width=".9" fill="none"/><path d="M0 8.6l1.3 1.6 1.5-1.4M9.8 8.8l1.5 1.4 1.1-1.7" stroke="#3a3a3a" stroke-width=".8" fill="none"/><path d="M5.6 11l1.8-3" stroke="#3a3a3a" stroke-width="1"/><circle cx="5.8" cy="10.8" r="1.1" stroke="#3a3a3a" stroke-width=".7" fill="none"/><path d="M6.3 4.4v1.2" stroke="#3a3a3a" stroke-width=".6"/></svg>
<div class="t" style="left:37.5px;top:731.6px;color:#1e1e1e;width:118.5px;overflow:hidden">Cooling water #2 - water flow</div>
<div class="t" style="left:161.5px;top:731.6px;color:#1e1e1e">16.1 L/min</div>
<div class="a" style="left:11px;top:743px;width:146px;height:14px;background:#fff;border-left:1px solid #e3e3e3;border-bottom:1px solid #e3e3e3"></div>
<div class="a" style="left:157px;top:743px;width:122px;height:14px;background:#fff;border-left:1px solid #e3e3e3;border-bottom:1px solid #e3e3e3"></div>
<svg style="left:5px;top:748.5px" width="4" height="4" viewBox="0 0 4 4"><path d="M4 0V4H0z" fill="#555"/></svg>
<div class="t" style="left:25px;top:746.6px;color:#1e1e1e;width:131px;overflow:hidden">Operating time</div>
<div class="a" style="left:24px;top:757px;width:133px;height:15px;background:#fff;border-left:1px solid #e3e3e3;border-bottom:1px solid #e3e3e3"></div>
<div class="a" style="left:157px;top:757px;width:122px;height:15px;background:#fff;border-left:1px solid #e3e3e3;border-bottom:1px solid #e3e3e3"></div>
<svg style="left:24.5px;top:757.5px" width="13" height="13" viewBox="0 0 12 13"><path d="M1.3 9.8A5.3 5.3 0 0 1 11.3 9.8" stroke="#3a3a3a" stroke-width=".9" fill="none"/><path d="M0 8.6l1.3 1.6 1.5-1.4M9.8 8.8l1.5 1.4 1.1-1.7" stroke="#3a3a3a" stroke-width=".8" fill="none"/><path d="M5.6 11l1.8-3" stroke="#3a3a3a" stroke-width="1"/><circle cx="5.8" cy="10.8" r="1.1" stroke="#3a3a3a" stroke-width=".7" fill="none"/><path d="M6.3 4.4v1.2" stroke="#3a3a3a" stroke-width=".6"/></svg>
<div class="t" style="left:37.5px;top:760.6px;color:#1e1e1e;width:118.5px;overflow:hidden">Operating time of the X-ray ON</div>
<div class="t" style="left:161.5px;top:760.6px;color:#1e1e1e">3177.07 H</div>
<div class="a" style="left:24px;top:772px;width:133px;height:14px;background:#fff;border-left:1px solid #e3e3e3;border-bottom:1px solid #e3e3e3"></div>
<div class="a" style="left:157px;top:772px;width:122px;height:14px;background:#fff;border-left:1px solid #e3e3e3;border-bottom:1px solid #e3e3e3"></div>
<svg style="left:24.5px;top:772.5px" width="13" height="13" viewBox="0 0 12 13"><path d="M1.3 9.8A5.3 5.3 0 0 1 11.3 9.8" stroke="#3a3a3a" stroke-width=".9" fill="none"/><path d="M0 8.6l1.3 1.6 1.5-1.4M9.8 8.8l1.5 1.4 1.1-1.7" stroke="#3a3a3a" stroke-width=".8" fill="none"/><path d="M5.6 11l1.8-3" stroke="#3a3a3a" stroke-width="1"/><circle cx="5.8" cy="10.8" r="1.1" stroke="#3a3a3a" stroke-width=".7" fill="none"/><path d="M6.3 4.4v1.2" stroke="#3a3a3a" stroke-width=".6"/></svg>
<div class="t" style="left:37.5px;top:775.6px;color:#1e1e1e;width:118.5px;overflow:hidden">Operating time of the target</div>
<div class="t" style="left:161.5px;top:775.6px;color:#1e1e1e">250.18 H</div>
<div class="a" style="left:24px;top:786px;width:133px;height:15px;background:#fff;border-left:1px solid #e3e3e3;border-bottom:1px solid #e3e3e3"></div>
<div class="a" style="left:157px;top:786px;width:122px;height:15px;background:#fff;border-left:1px solid #e3e3e3;border-bottom:1px solid #e3e3e3"></div>
<svg style="left:24.5px;top:786.5px" width="13" height="13" viewBox="0 0 12 13"><path d="M1.3 9.8A5.3 5.3 0 0 1 11.3 9.8" stroke="#3a3a3a" stroke-width=".9" fill="none"/><path d="M0 8.6l1.3 1.6 1.5-1.4M9.8 8.8l1.5 1.4 1.1-1.7" stroke="#3a3a3a" stroke-width=".8" fill="none"/><path d="M5.6 11l1.8-3" stroke="#3a3a3a" stroke-width="1"/><circle cx="5.8" cy="10.8" r="1.1" stroke="#3a3a3a" stroke-width=".7" fill="none"/><path d="M6.3 4.4v1.2" stroke="#3a3a3a" stroke-width=".6"/></svg>
<div class="t" style="left:37.5px;top:789.6px;color:#1e1e1e;width:118.5px;overflow:hidden">Operating time of the filament</div>
<div class="t" style="left:161.5px;top:789.6px;color:#1e1e1e">3177.07 H</div>
</div>
<div class="a" style="left:1838px;top:109px;width:1px;height:866px;background:#e2e2e2"></div></body></html>
